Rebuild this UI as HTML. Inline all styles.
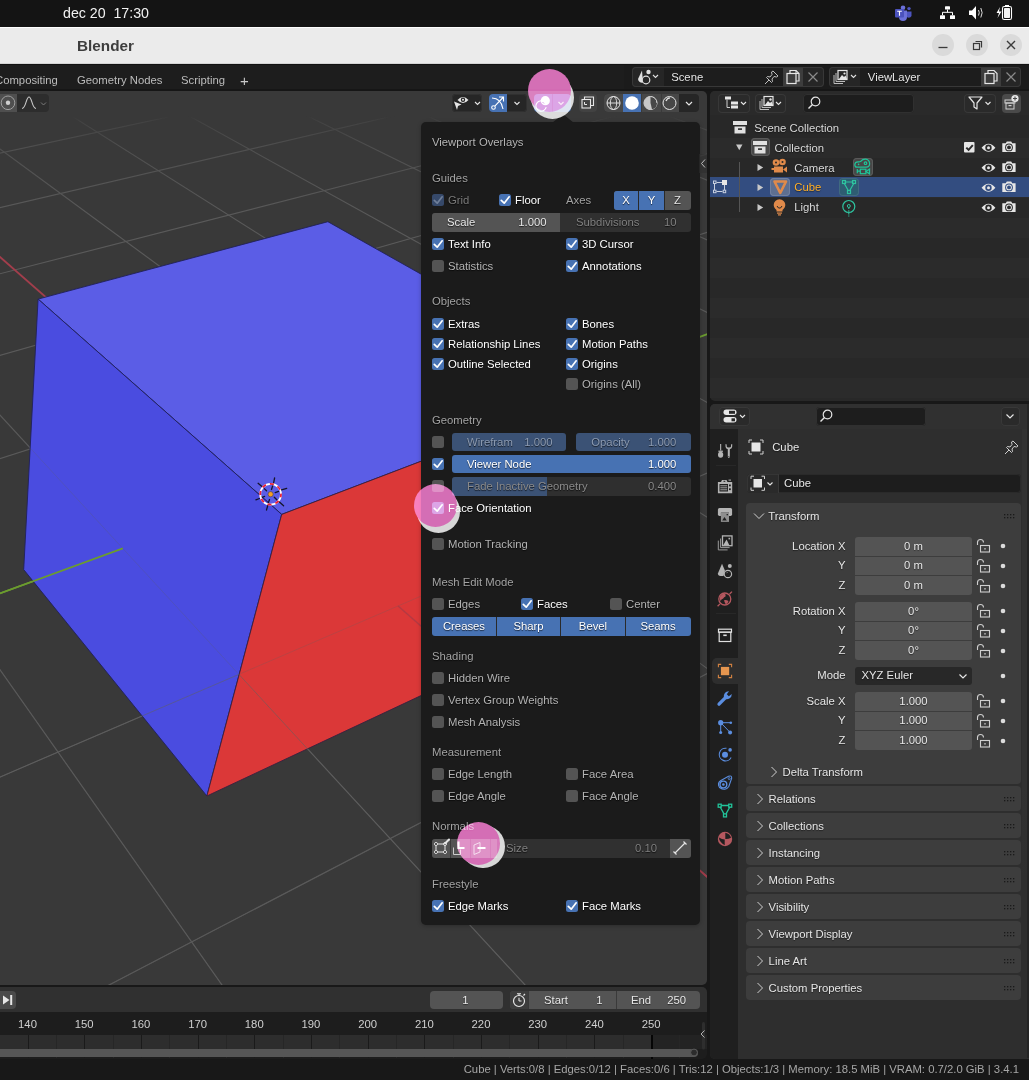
<!DOCTYPE html>
<html><head><meta charset="utf-8"><style>
html,body{margin:0;padding:0;}
body{width:1029px;height:1080px;position:relative;overflow:hidden;background:#181818;font-family:"Liberation Sans", sans-serif;}
.t{position:absolute;white-space:nowrap;line-height:1;}
</style></head><body>
<div style="position:absolute;left:0px;top:0px;width:1029px;height:1080px;background:#181818;border-radius:0px;"></div><div style="position:absolute;left:0px;top:0px;width:1029px;height:27px;background:#141414;border-radius:0px;"></div><div class="t" style="left:63px;top:6.05px;color:#f2f2f2;font-size:14.2px;font-weight:normal;">dec 20&nbsp; 17:30</div><svg style="position:absolute;left:893px;top:4px;" width="20" height="18" viewBox="0 0 20 18"><circle cx="16" cy="4.6" r="1.7" fill="#4d55c0"/><path d="M13 7.5 H18.5 V12 A3 3 0 0 1 13 12 Z" fill="#4d55c0"/><circle cx="10" cy="3.8" r="2.3" fill="#6b70d8"/><path d="M6 6.5 H14 V13 A4 4 0 0 1 6 13 Z" fill="#6b70d8"/><rect x="2" y="5" width="9" height="8.5" rx="1" fill="#4b52bd"/><path d="M4.2 7.3 H8.8 M6.5 7.3 V11.8" stroke="#fff" stroke-width="1.1"/></svg><svg style="position:absolute;left:938px;top:4px;" width="19" height="17" viewBox="0 0 19 17"><rect x="7" y="2.2" width="5" height="3.4" rx="0.6" fill="#fff"/><path d="M9.5 5.6 V8.3 M4.5 11 V8.3 H14.5 V11" fill="none" stroke="#fff" stroke-width="1"/><rect x="2" y="11.2" width="5" height="3.8" rx="0.6" fill="#fff"/><rect x="12" y="11.2" width="5" height="3.8" rx="0.6" fill="#fff"/></svg><svg style="position:absolute;left:967px;top:4px;" width="18" height="17" viewBox="0 0 18 17"><path d="M2 6.5 H5 L9 2 V15.5 L5 11 H2 Z" fill="#fff"/><path d="M11.5 6 Q13 8.7 11.5 11.5 M13.8 4 Q16.5 8.7 13.8 13.5" fill="none" stroke="#ddd" stroke-width="1"/></svg><svg style="position:absolute;left:995px;top:3px;" width="19" height="18" viewBox="0 0 19 18"><path d="M5 4 L1.5 10 H4 L2.5 15 L6.5 8.5 H4 Z" fill="#fff"/><rect x="7.5" y="3.5" width="9" height="13" rx="1.8" fill="none" stroke="#fff" stroke-width="1.1"/><rect x="10" y="2" width="4" height="1.5" fill="#fff"/><rect x="9" y="5" width="6" height="10" rx="0.8" fill="#f2f2f2"/></svg><div style="position:absolute;left:0px;top:27px;width:1029px;height:37px;background:#ebebeb;border-radius:0px;"></div><div style="position:absolute;left:0px;top:27px;width:1029px;height:1px;background:#ffffff;border-radius:0px;"></div><div class="t" style="left:77px;top:38.05px;color:#3d3d3d;font-size:15.3px;font-weight:bold;">Blender</div><div style="position:absolute;left:932px;top:34px;width:22px;height:22px;border-radius:11px;background:#dadada"></div><div style="position:absolute;left:966px;top:34px;width:22px;height:22px;border-radius:11px;background:#dadada"></div><div style="position:absolute;left:1000px;top:34px;width:22px;height:22px;border-radius:11px;background:#dadada"></div><svg style="position:absolute;left:932px;top:34px;" width="22" height="22" viewBox="0 0 22 22"><line x1="6.5" y1="13.5" x2="15.5" y2="13.5" stroke="#3a3a3a" stroke-width="1.3"/></svg><svg style="position:absolute;left:966px;top:34px;" width="22" height="22" viewBox="0 0 22 22"><rect x="7.5" y="9.5" width="6" height="6" fill="none" stroke="#3a3a3a" stroke-width="1.2"/><path d="M9.5 7.5 H15.5 V13.5" fill="none" stroke="#3a3a3a" stroke-width="1.2"/></svg><svg style="position:absolute;left:1000px;top:34px;" width="22" height="22" viewBox="0 0 22 22"><path d="M7 7 L15 15 M15 7 L7 15" stroke="#3a3a3a" stroke-width="1.4"/></svg><div style="position:absolute;left:0px;top:64px;width:1029px;height:27px;background:#1d1d1d;border-radius:0px;"></div><div style="position:absolute;left:623.5px;top:65px;width:406px;height:24px;background:#1b1b1b;border-radius:0px;"></div><div style="position:absolute;left:0px;top:64px;width:1029px;height:1px;background:#121212;border-radius:0px;"></div><div style="position:absolute;left:0px;top:89px;width:1029px;height:2px;background:#161616;border-radius:0px;"></div><div style="position:absolute;left:0px;top:63px;width:1029px;height:1px;background:#d4d4d4;border-radius:0px;"></div><div class="t" style="left:-5px;top:75.17px;color:#bcbcbc;font-size:11.3px;font-weight:normal;">Compositing</div><div class="t" style="left:77px;top:75.17px;color:#bcbcbc;font-size:11.3px;font-weight:normal;">Geometry Nodes</div><div class="t" style="left:181px;top:75.17px;color:#bcbcbc;font-size:11.3px;font-weight:normal;">Scripting</div><div class="t" style="left:240px;top:73.33px;color:#c8c8c8;font-size:15px;font-weight:normal;">+</div><div style="position:absolute;left:0;top:91px;width:707px;height:894px;background:#393939;border-radius:0 5px 5px 0;overflow:hidden"><svg width="707" height="894" viewBox="0 91 707 894" style="position:absolute;left:0;top:0">
<defs><linearGradient id="gf" x1="0" y1="91" x2="0" y2="985" gradientUnits="userSpaceOnUse"><stop offset="0.0000" stop-color="#fff" stop-opacity="0"/><stop offset="0.0280" stop-color="#fff" stop-opacity="0"/><stop offset="0.0347" stop-color="#fff" stop-opacity="0.3"/><stop offset="0.0660" stop-color="#fff" stop-opacity="0.7"/><stop offset="0.1443" stop-color="#fff" stop-opacity="1"/><stop offset="1.0000" stop-color="#fff" stop-opacity="1"/></linearGradient><mask id="gm"><rect x="0" y="91" width="707" height="894" fill="url(#gf)"/></mask></defs>
<g mask="url(#gm)"><line x1="-36.1" y1="2233.0" x2="1969.9" y2="388.5" stroke="#5a5a5a" stroke-width="1.15" stroke-opacity="1"/><line x1="-210.4" y1="1596.3" x2="1719.6" y2="315.4" stroke="#5a5a5a" stroke-width="1.15" stroke-opacity="1"/><line x1="-317.0" y1="1206.9" x2="1511.5" y2="254.6" stroke="#5a5a5a" stroke-width="1.15" stroke-opacity="1"/><line x1="-388.9" y1="944.1" x2="1335.5" y2="203.2" stroke="#5a5a5a" stroke-width="1.15" stroke-opacity="1"/><line x1="-479.8" y1="612.1" x2="1054.5" y2="121.1" stroke="#5a5a5a" stroke-width="1.15" stroke-opacity="1"/><line x1="-510.3" y1="500.5" x2="940.4" y2="87.8" stroke="#5a5a5a" stroke-width="1.15" stroke-opacity="1"/><line x1="-534.8" y1="410.9" x2="839.9" y2="58.4" stroke="#5a5a5a" stroke-width="1.15" stroke-opacity="1"/><line x1="-555.0" y1="337.4" x2="750.6" y2="32.3" stroke="#5a5a5a" stroke-width="1.15" stroke-opacity="1"/><line x1="-571.8" y1="276.0" x2="670.8" y2="9.0" stroke="#5a5a5a" stroke-width="1.15" stroke-opacity="1"/><line x1="-586.0" y1="223.9" x2="598.9" y2="-12.0" stroke="#5a5a5a" stroke-width="1.15" stroke-opacity="1"/><line x1="-598.3" y1="179.2" x2="534.0" y2="-31.0" stroke="#5a5a5a" stroke-width="1.15" stroke-opacity="1"/><line x1="-608.9" y1="140.4" x2="474.9" y2="-48.2" stroke="#5a5a5a" stroke-width="1.15" stroke-opacity="1"/><line x1="-618.2" y1="106.4" x2="421.1" y2="-64.0" stroke="#5a5a5a" stroke-width="1.15" stroke-opacity="1"/><line x1="-626.4" y1="76.4" x2="371.7" y2="-78.4" stroke="#5a5a5a" stroke-width="1.15" stroke-opacity="1"/><line x1="-36.1" y1="2233.0" x2="-626.4" y2="76.4" stroke="#5a5a5a" stroke-width="1.15" stroke-opacity="1"/><line x1="354.8" y1="1873.6" x2="-529.7" y2="61.4" stroke="#5a5a5a" stroke-width="1.15" stroke-opacity="1"/><line x1="653.9" y1="1598.5" x2="-438.2" y2="47.2" stroke="#5a5a5a" stroke-width="1.15" stroke-opacity="1"/><line x1="890.2" y1="1381.2" x2="-351.5" y2="33.7" stroke="#5a5a5a" stroke-width="1.15" stroke-opacity="1"/><line x1="1239.8" y1="1059.8" x2="-190.8" y2="8.8" stroke="#5a5a5a" stroke-width="1.15" stroke-opacity="1"/><line x1="1372.8" y1="937.5" x2="-116.3" y2="-2.7" stroke="#5a5a5a" stroke-width="1.15" stroke-opacity="1"/><line x1="1486.0" y1="833.4" x2="-45.2" y2="-13.7" stroke="#5a5a5a" stroke-width="1.15" stroke-opacity="1"/><line x1="1583.7" y1="743.6" x2="22.5" y2="-24.2" stroke="#5a5a5a" stroke-width="1.15" stroke-opacity="1"/><line x1="1668.8" y1="665.3" x2="87.3" y2="-34.3" stroke="#5a5a5a" stroke-width="1.15" stroke-opacity="1"/><line x1="1743.6" y1="596.6" x2="149.1" y2="-43.9" stroke="#5a5a5a" stroke-width="1.15" stroke-opacity="1"/><line x1="1809.8" y1="535.6" x2="208.4" y2="-53.1" stroke="#5a5a5a" stroke-width="1.15" stroke-opacity="1"/><line x1="1869.0" y1="481.3" x2="265.1" y2="-61.8" stroke="#5a5a5a" stroke-width="1.15" stroke-opacity="1"/><line x1="1922.0" y1="432.5" x2="319.5" y2="-70.3" stroke="#5a5a5a" stroke-width="1.15" stroke-opacity="1"/><line x1="1969.9" y1="388.5" x2="371.7" y2="-78.4" stroke="#5a5a5a" stroke-width="1.15" stroke-opacity="1"/><line x1="1081.6" y1="1205.2" x2="-269.1" y2="21.0" stroke="#a23e4c" stroke-width="1.8" stroke-opacity="1"/><line x1="-440.7" y1="754.9" x2="1184.9" y2="159.2" stroke="#6a9a30" stroke-width="1.8" stroke-opacity="1"/></g>
<polygon points="38.1,299.1 327.9,221.7 619.3,385.7 281.7,514.4" fill="#5b5de6" stroke="#20205a" stroke-width="0.9" stroke-linejoin="round"/>
<polygon points="38.1,299.1 281.7,514.4 206.9,796.0 23.7,569.6" fill="#4a4ce0" stroke="#20205a" stroke-width="0.9" stroke-linejoin="round"/>
<polygon points="281.7,514.4 619.3,385.7 619.3,602.6 206.9,796.0" fill="#db3838" stroke="#3a2040" stroke-width="0.9" stroke-linejoin="round"/>
<g><line x1="-36.1" y1="2233.0" x2="-626.4" y2="76.4" stroke="#5a5a5a" stroke-width="1" stroke-opacity="0.5"/><line x1="354.8" y1="1873.6" x2="-529.7" y2="61.4" stroke="#5a5a5a" stroke-width="1" stroke-opacity="0.5"/><line x1="653.9" y1="1598.5" x2="-438.2" y2="47.2" stroke="#5a5a5a" stroke-width="1" stroke-opacity="0.5"/><line x1="-36.1" y1="2233.0" x2="1969.9" y2="388.5" stroke="#5a5a5a" stroke-width="1" stroke-opacity="0.5"/><line x1="-210.4" y1="1596.3" x2="1719.6" y2="315.4" stroke="#5a5a5a" stroke-width="1" stroke-opacity="0.5"/><line x1="-317.0" y1="1206.9" x2="1511.5" y2="254.6" stroke="#5a5a5a" stroke-width="1" stroke-opacity="0.5"/><line x1="890.2" y1="1381.2" x2="238.9" y2="674.4" stroke="#606060" stroke-width="1" stroke-opacity="0.55"/><line x1="238.9" y1="674.4" x2="30.9" y2="448.7" stroke="#606060" stroke-width="1" stroke-opacity="0.25"/><line x1="-388.9" y1="944.1" x2="238.9" y2="674.4" stroke="#606060" stroke-width="1" stroke-opacity="0.55"/><line x1="238.9" y1="674.4" x2="539.4" y2="545.2" stroke="#606060" stroke-width="1" stroke-opacity="0.25"/><line x1="1081.6" y1="1205.2" x2="398.1" y2="606.0" stroke="#9b3a4a" stroke-width="1.5" stroke-opacity="0.6"/><line x1="-440.7" y1="754.9" x2="122.8" y2="548.4" stroke="#6b9c2e" stroke-width="1.8" stroke-opacity="1"/></g>
<line x1="274.6" y1="478" x2="273.4" y2="483.9" stroke="#15152a" stroke-width="1.3" stroke-linecap="round"/>
<line x1="272.7" y1="485.8" x2="271.5" y2="489.5" stroke="#15152a" stroke-width="1.3" stroke-linecap="round"/>
<line x1="269.5" y1="499.5" x2="268.4" y2="502.6" stroke="#15152a" stroke-width="1.3" stroke-linecap="round"/>
<line x1="267.8" y1="505.4" x2="266.5" y2="510" stroke="#15152a" stroke-width="1.3" stroke-linecap="round"/>
<line x1="286.7" y1="488.3" x2="279.9" y2="490.4" stroke="#15152a" stroke-width="1.3" stroke-linecap="round"/>
<line x1="278.6" y1="491.4" x2="275.2" y2="492.6" stroke="#15152a" stroke-width="1.3" stroke-linecap="round"/>
<line x1="264.6" y1="496.4" x2="262.2" y2="497.3" stroke="#15152a" stroke-width="1.3" stroke-linecap="round"/>
<line x1="259.4" y1="498.5" x2="255.9" y2="499.8" stroke="#15152a" stroke-width="1.3" stroke-linecap="round"/>
<line x1="258.1" y1="483.3" x2="262.8" y2="487.3" stroke="#15152a" stroke-width="1.3" stroke-linecap="round"/>
<line x1="264.3" y1="488.6" x2="266.5" y2="490.8" stroke="#15152a" stroke-width="1.3" stroke-linecap="round"/>
<line x1="274.3" y1="497.3" x2="276.8" y2="499.8" stroke="#15152a" stroke-width="1.3" stroke-linecap="round"/>
<line x1="278.6" y1="501.3" x2="283.6" y2="505.7" stroke="#15152a" stroke-width="1.3" stroke-linecap="round"/>
<circle cx="270.6" cy="494.2" r="10.4" fill="none" stroke="#ffffff" stroke-width="1.8"/>
<circle cx="270.6" cy="494.2" r="10.4" fill="none" stroke="#e8203a" stroke-width="1.8" stroke-dasharray="4.08 4.08" stroke-dashoffset="1"/>
<circle cx="270.6" cy="494.2" r="2.6" fill="#f5a020" stroke="#30306a" stroke-width="0.6"/>
</svg></div><div style="position:absolute;left:710px;top:91px;width:319px;height:310px;background:#282828;border-radius:5px 0 0 5px"></div><div style="position:absolute;left:710px;top:91px;width:319px;height:24px;background:#2a2a2a;border-radius:0px;border-radius:5px 0 0 0"></div><div style="position:absolute;left:710px;top:404px;width:319px;height:655px;background:#2e2e2e;border-radius:5px 0 0 5px;overflow:hidden"></div><div style="position:absolute;left:710px;top:404px;width:319px;height:25px;background:#303030;border-radius:0px;border-radius:5px 0 0 0"></div><div style="position:absolute;left:710px;top:429px;width:28px;height:630px;background:#1f1f1f;border-radius:0px;border-radius:0 0 0 5px"></div><div style="position:absolute;left:1021.5px;top:429px;width:6px;height:450px;background:linear-gradient(#323232 0%,#323232 80%,rgba(50,50,50,0) 100%)"></div><div style="position:absolute;left:1027px;top:404px;width:2px;height:654px;background:#242424;border-radius:0px;border-radius:0 0 0 0"></div><div style="position:absolute;left:0;top:987px;width:707px;height:72px;background:#1d1d1d;border-radius:0 5px 5px 0;overflow:hidden"></div><div style="position:absolute;left:0px;top:987px;width:707px;height:25px;background:#303030;border-radius:0px;border-radius:0 5px 0 0"></div><div class="t" style="right:10px;top:1064.27px;color:#a6a6a6;font-size:11.3px;font-weight:normal;text-align:right;">Cube | Verts:0/8 | Edges:0/12 | Faces:0/6 | Tris:12 | Objects:1/3 | Memory: 18.5 MiB | VRAM: 0.7/2.0 GiB | 3.4.1</div><div style="position:absolute;left:632.3px;top:67.2px;width:191.5px;height:19.7px;background:#262626;border-radius:4px;box-shadow:inset 0 0 0 1px #383838"></div><div style="position:absolute;left:663.8px;top:68.2px;width:119.6px;height:17.7px;background:#1d1d1d;border-radius:0px;"></div><div style="position:absolute;left:783.4px;top:68.2px;width:19.5px;height:17.7px;background:#3d3d3d;border-radius:0px;"></div><svg style="position:absolute;left:636px;top:69px;" width="28" height="16" viewBox="0 0 28 16"><path d="M6 1.5 L2 10 A4 4 0 0 0 7 13.5" fill="#e0e0e0"/><circle cx="12.5" cy="3" r="2.2" fill="#e0e0e0"/><circle cx="10" cy="11" r="3.8" fill="#282828" stroke="#e0e0e0" stroke-width="1.2"/><path d="M17 6 L19.5 8.5 L22 6" fill="none" stroke="#e0e0e0" stroke-width="1.1"/></svg><div class="t" style="left:671.2px;top:71.57px;color:#e6e6e6;font-size:11.3px;font-weight:normal;text-shadow:0 1px 1px rgba(0,0,0,0.5);">Scene</div><svg style="position:absolute;left:764px;top:69px;" width="16" height="16" viewBox="0 0 16 16"><path d="M9 2 L14 7 L12.5 8 L10 7.5 L8 10 L8.5 12.5 L7.5 13.5 L2.5 8.5 L3.5 7.5 L6 8 L8 5.5 L7.5 3 Z" fill="none" stroke="#c0c0c0" stroke-width="1"/><path d="M5 11 L1 15" stroke="#c0c0c0" stroke-width="1"/></svg><svg style="position:absolute;left:785px;top:69px;" width="16" height="16" viewBox="0 0 16 16"><path d="M5 4 V1.5 H11 L14 4.5 V12 H11" fill="none" stroke="#e6e6e6" stroke-width="1.2"/><rect x="2" y="4.5" width="9" height="10" fill="none" stroke="#e6e6e6" stroke-width="1.2"/><path d="M11 1.5 V4.5 H14" fill="none" stroke="#e6e6e6" stroke-width="1"/></svg><svg style="position:absolute;left:805px;top:69px;" width="16" height="16" viewBox="0 0 16 16"><path d="M3.5 3.5 L12.5 12.5 M12.5 3.5 L3.5 12.5" stroke="#8a8a8a" stroke-width="1.2"/></svg><div style="position:absolute;left:829.3px;top:67.2px;width:192px;height:19.7px;background:#262626;border-radius:4px;box-shadow:inset 0 0 0 1px #383838"></div><div style="position:absolute;left:860px;top:68.2px;width:121px;height:17.7px;background:#1d1d1d;border-radius:0px;"></div><div style="position:absolute;left:981px;top:68.2px;width:19.5px;height:17.7px;background:#3d3d3d;border-radius:0px;"></div><svg style="position:absolute;left:833px;top:69px;" width="28" height="16" viewBox="0 0 28 16"><rect x="5" y="1.5" width="9" height="9" fill="none" stroke="#e6e6e6" stroke-width="1.2"/><path d="M6 10 L9 6 L11 8 L12.5 6.5 L14 10 Z" fill="#e6e6e6"/><circle cx="11.5" cy="4.5" r="1.1" fill="#e6e6e6"/><path d="M3 4 V12.5 H12 M1 6 V14.5 H10" fill="none" stroke="#bdbdbd" stroke-width="1"/><path d="M18 6 L20.5 8.5 L23 6" fill="none" stroke="#e0e0e0" stroke-width="1.1"/></svg><div class="t" style="left:867.8px;top:71.57px;color:#e6e6e6;font-size:11.3px;font-weight:normal;text-shadow:0 1px 1px rgba(0,0,0,0.5);">ViewLayer</div><svg style="position:absolute;left:983px;top:69px;" width="16" height="16" viewBox="0 0 16 16"><path d="M5 4 V1.5 H11 L14 4.5 V12 H11" fill="none" stroke="#e6e6e6" stroke-width="1.2"/><rect x="2" y="4.5" width="9" height="10" fill="none" stroke="#e6e6e6" stroke-width="1.2"/></svg><svg style="position:absolute;left:1003px;top:69px;" width="16" height="16" viewBox="0 0 16 16"><path d="M3.5 3.5 L12.5 12.5 M12.5 3.5 L3.5 12.5" stroke="#8a8a8a" stroke-width="1.2"/></svg><div style="position:absolute;left:0px;top:93.8px;width:17.2px;height:18.1px;background:#4f4f4f;border-radius:0px;"></div><div style="position:absolute;left:17.2px;top:93.8px;width:31.5px;height:18.1px;background:#2d2d2d;border-radius:0px;border-radius:0 4px 4px 0"></div><svg style="position:absolute;left:0px;top:94px;" width="18" height="18" viewBox="0 0 18 18"><circle cx="8" cy="8.8" r="6.8" fill="none" stroke="#a8a8a8" stroke-width="0.9"/><circle cx="8" cy="8.8" r="2.2" fill="#d0d0d0"/></svg><svg style="position:absolute;left:18px;top:94px;" width="31" height="18" viewBox="0 0 31 18"><path d="M4 14.5 C8 14.5 8 3 11 3 C14 3 14 14.5 18 14.5" fill="none" stroke="#c8c8c8" stroke-width="1.1"/><path d="M23 8.5 L25.5 11 L28 8.5" fill="none" stroke="#7a7a7a" stroke-width="1"/></svg><div style="position:absolute;left:452.4px;top:93.8px;width:29.7px;height:18.3px;background:#262626;border-radius:4px;box-shadow:inset 0 0 0 1px #303030"></div><svg style="position:absolute;left:452px;top:94px;" width="30" height="18" viewBox="0 0 30 18"><path d="M5.5 6 Q11 0 16.5 6 Q11 12 5.5 6 Z" fill="#e6e6e6"/><circle cx="11" cy="5.7" r="2.2" fill="#262626"/><circle cx="11" cy="5.7" r="1" fill="#e6e6e6"/><path d="M2 7.5 L9.5 10.5 L6 12 L5 16 Z" fill="#e6e6e6"/><path d="M23 8 L25.5 10.5 L28 8" fill="none" stroke="#e6e6e6" stroke-width="1.1"/></svg><div style="position:absolute;left:489.1px;top:93.8px;width:37.9px;height:18.3px;background:#262626;border-radius:4px;box-shadow:inset 0 0 0 1px #303030"></div><div style="position:absolute;left:489.1px;top:93.8px;width:18px;height:18.3px;background:#4772b3;border-radius:0px;border-radius:4px 0 0 4px"></div><svg style="position:absolute;left:489px;top:94px;" width="38" height="18" viewBox="0 0 38 18"><path d="M3 4 Q12 4 14 15" fill="none" stroke="#fff" stroke-width="1.1"/><circle cx="4.5" cy="13.5" r="1.8" fill="none" stroke="#fff" stroke-width="1.1"/><path d="M5.8 12.2 L14 3.5 M10 3 H14.5 V7.5" fill="none" stroke="#fff" stroke-width="1.1"/><path d="M25.5 8 L28 10.5 L30.5 8" fill="none" stroke="#e6e6e6" stroke-width="1.1"/></svg><div style="position:absolute;left:533.9px;top:93.8px;width:37.3px;height:18.3px;background:#4772b3;border-radius:4px;"></div><div style="position:absolute;left:551.6px;top:93.8px;width:1px;height:18.3px;background:#3a5d95;border-radius:0px;"></div><svg style="position:absolute;left:534px;top:94px;" width="18" height="18" viewBox="0 0 18 18"><circle cx="11.3" cy="6.7" r="4.6" fill="#fff"/><path d="M9.2 7.2 A5.2 5.2 0 1 0 12.2 13.2" fill="none" stroke="#fff" stroke-width="1.1"/><path d="M8.5 8 L10 9.5" stroke="#4772b3" stroke-width="1"/></svg><svg style="position:absolute;left:552px;top:94px;" width="19" height="18" viewBox="0 0 19 18"><path d="M6.5 8 L9 10.5 L11.5 8" fill="none" stroke="#e6e6e6" stroke-width="1.1"/></svg><div style="position:absolute;left:579.4px;top:93.7px;width:17.3px;height:18.3px;background:#424242;border-radius:4px;"></div><svg style="position:absolute;left:579px;top:94px;" width="18" height="18" viewBox="0 0 18 18"><rect x="3" y="5.5" width="8.5" height="8.5" fill="none" stroke="#e6e6e6" stroke-width="1.1"/><path d="M5.5 5.5 V3 H14.5 V11.5 H11.5" fill="none" stroke="#e6e6e6" stroke-width="1.1"/><path d="M5.5 8 V10.5 H8" fill="none" stroke="#e6e6e6" stroke-width="1"/></svg><div style="position:absolute;left:604.3px;top:93.7px;width:94.3px;height:18.3px;background:#262626;border-radius:4px;"></div><div style="position:absolute;left:604.3px;top:93.7px;width:18.5px;height:18.3px;background:#474747;border-radius:0px;border-radius:4px 0 0 4px"></div><div style="position:absolute;left:622.8px;top:93.7px;width:18.2px;height:18.3px;background:#4772b3;border-radius:0px;"></div><div style="position:absolute;left:641px;top:93.7px;width:19.5px;height:18.3px;background:#474747;border-radius:0px;"></div><div style="position:absolute;left:660.5px;top:93.7px;width:18.7px;height:18.3px;background:#474747;border-radius:0px;"></div><div style="position:absolute;left:641px;top:93.7px;width:1px;height:18.3px;background:#3a3a3a;border-radius:0px;"></div><div style="position:absolute;left:660.5px;top:93.7px;width:1px;height:18.3px;background:#3a3a3a;border-radius:0px;"></div><svg style="position:absolute;left:604px;top:94px;" width="19" height="18" viewBox="0 0 19 18"><circle cx="9.5" cy="9" r="6.5" fill="none" stroke="#e6e6e6" stroke-width="1"/><ellipse cx="9.5" cy="9" rx="3.2" ry="6.5" fill="none" stroke="#e6e6e6" stroke-width="0.9"/><path d="M3 9 H16" stroke="#e6e6e6" stroke-width="0.9"/></svg><svg style="position:absolute;left:623px;top:94px;" width="18" height="18" viewBox="0 0 18 18"><circle cx="9" cy="9" r="6.8" fill="#ffffff"/></svg><svg style="position:absolute;left:641px;top:94px;" width="19" height="18" viewBox="0 0 19 18"><circle cx="9.5" cy="9" r="6.5" fill="none" stroke="#e6e6e6" stroke-width="1"/><path d="M9.5 2.5 V9 H16 A6.5 6.5 0 0 1 9.5 15.5 A6.5 6.5 0 0 1 3 9 A6.5 6.5 0 0 1 9.5 2.5 Z" fill="#c8c8c8"/><path d="M9.5 9 H16 A6.5 6.5 0 0 1 11 15.3 Z" fill="#474747"/></svg><svg style="position:absolute;left:660px;top:94px;" width="19" height="18" viewBox="0 0 19 18"><circle cx="9.5" cy="9" r="6.5" fill="none" stroke="#e6e6e6" stroke-width="1"/><path d="M6 7 Q7 4 10 3.8" fill="none" stroke="#e6e6e6" stroke-width="1.3"/></svg><svg style="position:absolute;left:679px;top:94px;" width="20" height="18" viewBox="0 0 20 18"><path d="M7 8 L10 11 L13 8" fill="none" stroke="#e6e6e6" stroke-width="1.2"/></svg><div style="position:absolute;left:0px;top:990.8px;width:16px;height:18px;background:#4a4a4a;border-radius:0px;border-radius:0 4px 4px 0"></div><svg style="position:absolute;left:0px;top:991px;" width="16" height="18" viewBox="0 0 16 18"><path d="M3 4.5 L9.5 9 L3 13.5 Z" fill="#e6e6e6"/><rect x="10.2" y="4" width="2" height="10" fill="#e6e6e6"/></svg><div style="position:absolute;left:429.7px;top:990.8px;width:73.5px;height:18.5px;background:#545454;border-radius:4px;"></div><div class="t" style="left:365.5px;width:200px;top:994.67px;color:#e6e6e6;font-size:11.3px;font-weight:normal;text-align:center;text-shadow:0 1px 1px rgba(0,0,0,0.5);">1</div><div style="position:absolute;left:509.8px;top:990.8px;width:190.4px;height:18.5px;background:#545454;border-radius:4px;"></div><div style="position:absolute;left:509.8px;top:990.8px;width:18.5px;height:18.5px;background:#3d3d3d;border-radius:0px;border-radius:4px 0 0 4px"></div><div style="position:absolute;left:528.3px;top:990.8px;width:1px;height:18.5px;background:#3a3a3a;border-radius:0px;"></div><div style="position:absolute;left:616px;top:990.8px;width:1px;height:18.5px;background:#3a3a3a;border-radius:0px;"></div><svg style="position:absolute;left:510px;top:991px;" width="18" height="18" viewBox="0 0 18 18"><circle cx="9" cy="10" r="5.5" fill="none" stroke="#e6e6e6" stroke-width="1.2"/><path d="M9 10 V6.8 M9 10 H11.5 M7 2.8 H11 M9 2.8 V4.5 M13.5 4.5 L15 3" fill="none" stroke="#e6e6e6" stroke-width="1.1"/></svg><div class="t" style="left:456px;width:200px;top:994.67px;color:#e6e6e6;font-size:11.3px;font-weight:normal;text-align:center;text-shadow:0 1px 1px rgba(0,0,0,0.5);">Start</div><div class="t" style="right:426.5px;top:994.67px;color:#e6e6e6;font-size:11.3px;font-weight:normal;text-align:right;text-shadow:0 1px 1px rgba(0,0,0,0.5);">1</div><div class="t" style="left:541px;width:200px;top:994.67px;color:#e6e6e6;font-size:11.3px;font-weight:normal;text-align:center;text-shadow:0 1px 1px rgba(0,0,0,0.5);">End</div><div class="t" style="right:343px;top:994.67px;color:#e6e6e6;font-size:11.3px;font-weight:normal;text-align:right;text-shadow:0 1px 1px rgba(0,0,0,0.5);">250</div><div class="t" style="left:-72.5px;width:200px;top:1019.27px;color:#cfcfcf;font-size:11.3px;font-weight:normal;text-align:center;">140</div><div class="t" style="left:-15.810000000000002px;width:200px;top:1019.27px;color:#cfcfcf;font-size:11.3px;font-weight:normal;text-align:center;">150</div><div class="t" style="left:40.879999999999995px;width:200px;top:1019.27px;color:#cfcfcf;font-size:11.3px;font-weight:normal;text-align:center;">160</div><div class="t" style="left:97.57px;width:200px;top:1019.27px;color:#cfcfcf;font-size:11.3px;font-weight:normal;text-align:center;">170</div><div class="t" style="left:154.26px;width:200px;top:1019.27px;color:#cfcfcf;font-size:11.3px;font-weight:normal;text-align:center;">180</div><div class="t" style="left:210.95px;width:200px;top:1019.27px;color:#cfcfcf;font-size:11.3px;font-weight:normal;text-align:center;">190</div><div class="t" style="left:267.64px;width:200px;top:1019.27px;color:#cfcfcf;font-size:11.3px;font-weight:normal;text-align:center;">200</div><div class="t" style="left:324.33px;width:200px;top:1019.27px;color:#cfcfcf;font-size:11.3px;font-weight:normal;text-align:center;">210</div><div class="t" style="left:381.02px;width:200px;top:1019.27px;color:#cfcfcf;font-size:11.3px;font-weight:normal;text-align:center;">220</div><div class="t" style="left:437.71000000000004px;width:200px;top:1019.27px;color:#cfcfcf;font-size:11.3px;font-weight:normal;text-align:center;">230</div><div class="t" style="left:494.4px;width:200px;top:1019.27px;color:#cfcfcf;font-size:11.3px;font-weight:normal;text-align:center;">240</div><div class="t" style="left:551.0899999999999px;width:200px;top:1019.27px;color:#cfcfcf;font-size:11.3px;font-weight:normal;text-align:center;">250</div><div style="position:absolute;left:0px;top:1035px;width:651px;height:14px;background:#2d2d2d;border-radius:0px;"></div><div style="position:absolute;left:651px;top:1035px;width:56px;height:14px;background:#232323;border-radius:0px;"></div><div style="position:absolute;left:28px;top:1035px;width:1px;height:23px;background:#1a1a1a;border-radius:0px;"></div><div style="position:absolute;left:56px;top:1035px;width:1px;height:23px;background:#262626;border-radius:0px;"></div><div style="position:absolute;left:84px;top:1035px;width:1px;height:23px;background:#1a1a1a;border-radius:0px;"></div><div style="position:absolute;left:113px;top:1035px;width:1px;height:23px;background:#262626;border-radius:0px;"></div><div style="position:absolute;left:141px;top:1035px;width:1px;height:23px;background:#1a1a1a;border-radius:0px;"></div><div style="position:absolute;left:169px;top:1035px;width:1px;height:23px;background:#262626;border-radius:0px;"></div><div style="position:absolute;left:198px;top:1035px;width:1px;height:23px;background:#1a1a1a;border-radius:0px;"></div><div style="position:absolute;left:226px;top:1035px;width:1px;height:23px;background:#262626;border-radius:0px;"></div><div style="position:absolute;left:254px;top:1035px;width:1px;height:23px;background:#1a1a1a;border-radius:0px;"></div><div style="position:absolute;left:283px;top:1035px;width:1px;height:23px;background:#262626;border-radius:0px;"></div><div style="position:absolute;left:311px;top:1035px;width:1px;height:23px;background:#1a1a1a;border-radius:0px;"></div><div style="position:absolute;left:339px;top:1035px;width:1px;height:23px;background:#262626;border-radius:0px;"></div><div style="position:absolute;left:368px;top:1035px;width:1px;height:23px;background:#1a1a1a;border-radius:0px;"></div><div style="position:absolute;left:396px;top:1035px;width:1px;height:23px;background:#262626;border-radius:0px;"></div><div style="position:absolute;left:424px;top:1035px;width:1px;height:23px;background:#1a1a1a;border-radius:0px;"></div><div style="position:absolute;left:453px;top:1035px;width:1px;height:23px;background:#262626;border-radius:0px;"></div><div style="position:absolute;left:481px;top:1035px;width:1px;height:23px;background:#1a1a1a;border-radius:0px;"></div><div style="position:absolute;left:509px;top:1035px;width:1px;height:23px;background:#262626;border-radius:0px;"></div><div style="position:absolute;left:538px;top:1035px;width:1px;height:23px;background:#1a1a1a;border-radius:0px;"></div><div style="position:absolute;left:566px;top:1035px;width:1px;height:23px;background:#262626;border-radius:0px;"></div><div style="position:absolute;left:594px;top:1035px;width:1px;height:23px;background:#1a1a1a;border-radius:0px;"></div><div style="position:absolute;left:623px;top:1035px;width:1px;height:23px;background:#262626;border-radius:0px;"></div><div style="position:absolute;left:651px;top:1035px;width:1px;height:23px;background:#1a1a1a;border-radius:0px;"></div><div style="position:absolute;left:679px;top:1035px;width:1px;height:23px;background:#262626;border-radius:0px;"></div><div style="position:absolute;left:651px;top:1035px;width:1.5px;height:24px;background:#050505;border-radius:0px;"></div><div style="position:absolute;left:-10px;top:1048.5px;width:708px;height:8.5px;background:#565656;border-radius:4.5px;"></div><svg style="position:absolute;left:686px;top:1047px;" width="14" height="12" viewBox="0 0 14 12"><circle cx="8" cy="5.5" r="3.4" fill="#2c2c2c" stroke="#5a5a5a" stroke-width="1"/></svg><svg style="position:absolute;left:698px;top:1021.5px;" width="9" height="28" viewBox="0 0 9 28"><rect x="4" y="0" width="3" height="27.5" rx="1.5" fill="#2e2e2e"/><path d="M6.5 8.5 L3 12 L6.5 15.5" fill="none" stroke="#b0b0b0" stroke-width="1"/></svg><div style="position:absolute;left:421px;top:122px;width:279px;height:803px;background:#1b1b1b;border-radius:5px;box-shadow:0 1px 4px rgba(0,0,0,0.25)"></div><div class="t" style="left:432px;top:136.67px;color:#b5b5b5;font-size:11.3px;font-weight:normal;text-shadow:0 1px 1px rgba(0,0,0,0.7);">Viewport Overlays</div><div class="t" style="left:432px;top:172.97px;color:#a3a3a3;font-size:11.3px;font-weight:normal;text-shadow:0 1px 1px rgba(0,0,0,0.7);">Guides</div><svg style="position:absolute;left:432px;top:194px;" width="12" height="12" viewBox="0 0 12 12"><rect x="0" y="0" width="12" height="12" rx="2.5" fill="#36496a"/><path d="M2.3 6.4 L5.2 9.2 L10.2 2.8" fill="none" stroke="#6f7f99" stroke-width="1.7" stroke-linecap="round" stroke-linejoin="round"/></svg><div class="t" style="left:448px;top:194.57px;color:#7a7a7a;font-size:11.3px;font-weight:normal;text-shadow:0 1px 1px rgba(0,0,0,0.7);">Grid</div><svg style="position:absolute;left:499px;top:194px;" width="12" height="12" viewBox="0 0 12 12"><rect x="0" y="0" width="12" height="12" rx="2.5" fill="#4772b3"/><path d="M2.3 6.4 L5.2 9.2 L10.2 2.8" fill="none" stroke="#ffffff" stroke-width="1.7" stroke-linecap="round" stroke-linejoin="round"/></svg><div class="t" style="left:515px;top:194.57px;color:#ffffff;font-size:11.3px;font-weight:normal;text-shadow:0 1px 1px rgba(0,0,0,0.7);">Floor</div><div class="t" style="left:566px;top:194.57px;color:#a3a3a3;font-size:11.3px;font-weight:normal;text-shadow:0 1px 1px rgba(0,0,0,0.7);">Axes</div><div style="position:absolute;left:614px;top:190.5px;width:77px;height:19px;background:#545454;border-radius:3px;"></div><div style="position:absolute;left:614px;top:190.5px;width:24px;height:19px;background:#4772b3;border-radius:0px;border-radius:3px 0 0 3px"></div><div style="position:absolute;left:639px;top:190.5px;width:25px;height:19px;background:#4772b3;border-radius:0px;"></div><div style="position:absolute;left:638px;top:190.5px;width:1px;height:19px;background:#2a2a2a;border-radius:0px;"></div><div style="position:absolute;left:664px;top:190.5px;width:1px;height:19px;background:#2a2a2a;border-radius:0px;"></div><div class="t" style="left:526px;width:200px;top:194.87px;color:#ffffff;font-size:11.3px;font-weight:normal;text-align:center;text-shadow:0 1px 1px rgba(0,0,0,0.7);">X</div><div class="t" style="left:551.5px;width:200px;top:194.87px;color:#ffffff;font-size:11.3px;font-weight:normal;text-align:center;text-shadow:0 1px 1px rgba(0,0,0,0.7);">Y</div><div class="t" style="left:577.5px;width:200px;top:194.87px;color:#e6e6e6;font-size:11.3px;font-weight:normal;text-align:center;text-shadow:0 1px 1px rgba(0,0,0,0.7);">Z</div><div style="position:absolute;left:432px;top:212.5px;width:259px;height:19px;background:#303030;border-radius:3px;"></div><div style="position:absolute;left:432px;top:212.5px;width:128px;height:19px;background:#545454;border-radius:0px;border-radius:3px 0 0 3px"></div><div class="t" style="left:447px;top:216.57px;color:#e6e6e6;font-size:11.3px;font-weight:normal;text-shadow:0 1px 1px rgba(0,0,0,0.7);">Scale</div><div class="t" style="right:482.5px;top:216.57px;color:#e6e6e6;font-size:11.3px;font-weight:normal;text-align:right;text-shadow:0 1px 1px rgba(0,0,0,0.7);">1.000</div><div class="t" style="left:576px;top:216.57px;color:#7f7f7f;font-size:11.3px;font-weight:normal;text-shadow:0 1px 1px rgba(0,0,0,0.7);">Subdivisions</div><div class="t" style="right:352.5px;top:216.57px;color:#7f7f7f;font-size:11.3px;font-weight:normal;text-align:right;text-shadow:0 1px 1px rgba(0,0,0,0.7);">10</div><svg style="position:absolute;left:432px;top:238px;" width="12" height="12" viewBox="0 0 12 12"><rect x="0" y="0" width="12" height="12" rx="2.5" fill="#4772b3"/><path d="M2.3 6.4 L5.2 9.2 L10.2 2.8" fill="none" stroke="#ffffff" stroke-width="1.7" stroke-linecap="round" stroke-linejoin="round"/></svg><div class="t" style="left:448px;top:238.57px;color:#ffffff;font-size:11.3px;font-weight:normal;text-shadow:0 1px 1px rgba(0,0,0,0.7);">Text Info</div><svg style="position:absolute;left:566px;top:238px;" width="12" height="12" viewBox="0 0 12 12"><rect x="0" y="0" width="12" height="12" rx="2.5" fill="#4772b3"/><path d="M2.3 6.4 L5.2 9.2 L10.2 2.8" fill="none" stroke="#ffffff" stroke-width="1.7" stroke-linecap="round" stroke-linejoin="round"/></svg><div class="t" style="left:582px;top:238.57px;color:#ffffff;font-size:11.3px;font-weight:normal;text-shadow:0 1px 1px rgba(0,0,0,0.7);">3D Cursor</div><svg style="position:absolute;left:432px;top:260px;" width="12" height="12" viewBox="0 0 12 12"><rect x="0" y="0" width="12" height="12" rx="2.5" fill="#545454"/></svg><div class="t" style="left:448px;top:260.57px;color:#b3b3b3;font-size:11.3px;font-weight:normal;text-shadow:0 1px 1px rgba(0,0,0,0.7);">Statistics</div><svg style="position:absolute;left:566px;top:260px;" width="12" height="12" viewBox="0 0 12 12"><rect x="0" y="0" width="12" height="12" rx="2.5" fill="#4772b3"/><path d="M2.3 6.4 L5.2 9.2 L10.2 2.8" fill="none" stroke="#ffffff" stroke-width="1.7" stroke-linecap="round" stroke-linejoin="round"/></svg><div class="t" style="left:582px;top:260.57px;color:#ffffff;font-size:11.3px;font-weight:normal;text-shadow:0 1px 1px rgba(0,0,0,0.7);">Annotations</div><div class="t" style="left:432px;top:296.37px;color:#a3a3a3;font-size:11.3px;font-weight:normal;text-shadow:0 1px 1px rgba(0,0,0,0.7);">Objects</div><svg style="position:absolute;left:432px;top:318px;" width="12" height="12" viewBox="0 0 12 12"><rect x="0" y="0" width="12" height="12" rx="2.5" fill="#4772b3"/><path d="M2.3 6.4 L5.2 9.2 L10.2 2.8" fill="none" stroke="#ffffff" stroke-width="1.7" stroke-linecap="round" stroke-linejoin="round"/></svg><div class="t" style="left:448px;top:318.57px;color:#ffffff;font-size:11.3px;font-weight:normal;text-shadow:0 1px 1px rgba(0,0,0,0.7);">Extras</div><svg style="position:absolute;left:566px;top:318px;" width="12" height="12" viewBox="0 0 12 12"><rect x="0" y="0" width="12" height="12" rx="2.5" fill="#4772b3"/><path d="M2.3 6.4 L5.2 9.2 L10.2 2.8" fill="none" stroke="#ffffff" stroke-width="1.7" stroke-linecap="round" stroke-linejoin="round"/></svg><div class="t" style="left:582px;top:318.57px;color:#ffffff;font-size:11.3px;font-weight:normal;text-shadow:0 1px 1px rgba(0,0,0,0.7);">Bones</div><svg style="position:absolute;left:432px;top:338px;" width="12" height="12" viewBox="0 0 12 12"><rect x="0" y="0" width="12" height="12" rx="2.5" fill="#4772b3"/><path d="M2.3 6.4 L5.2 9.2 L10.2 2.8" fill="none" stroke="#ffffff" stroke-width="1.7" stroke-linecap="round" stroke-linejoin="round"/></svg><div class="t" style="left:448px;top:338.57px;color:#ffffff;font-size:11.3px;font-weight:normal;text-shadow:0 1px 1px rgba(0,0,0,0.7);">Relationship Lines</div><svg style="position:absolute;left:566px;top:338px;" width="12" height="12" viewBox="0 0 12 12"><rect x="0" y="0" width="12" height="12" rx="2.5" fill="#4772b3"/><path d="M2.3 6.4 L5.2 9.2 L10.2 2.8" fill="none" stroke="#ffffff" stroke-width="1.7" stroke-linecap="round" stroke-linejoin="round"/></svg><div class="t" style="left:582px;top:338.57px;color:#ffffff;font-size:11.3px;font-weight:normal;text-shadow:0 1px 1px rgba(0,0,0,0.7);">Motion Paths</div><svg style="position:absolute;left:432px;top:358px;" width="12" height="12" viewBox="0 0 12 12"><rect x="0" y="0" width="12" height="12" rx="2.5" fill="#4772b3"/><path d="M2.3 6.4 L5.2 9.2 L10.2 2.8" fill="none" stroke="#ffffff" stroke-width="1.7" stroke-linecap="round" stroke-linejoin="round"/></svg><div class="t" style="left:448px;top:358.57px;color:#ffffff;font-size:11.3px;font-weight:normal;text-shadow:0 1px 1px rgba(0,0,0,0.7);">Outline Selected</div><svg style="position:absolute;left:566px;top:358px;" width="12" height="12" viewBox="0 0 12 12"><rect x="0" y="0" width="12" height="12" rx="2.5" fill="#4772b3"/><path d="M2.3 6.4 L5.2 9.2 L10.2 2.8" fill="none" stroke="#ffffff" stroke-width="1.7" stroke-linecap="round" stroke-linejoin="round"/></svg><div class="t" style="left:582px;top:358.57px;color:#ffffff;font-size:11.3px;font-weight:normal;text-shadow:0 1px 1px rgba(0,0,0,0.7);">Origins</div><svg style="position:absolute;left:566px;top:378px;" width="12" height="12" viewBox="0 0 12 12"><rect x="0" y="0" width="12" height="12" rx="2.5" fill="#545454"/></svg><div class="t" style="left:582px;top:378.57px;color:#b3b3b3;font-size:11.3px;font-weight:normal;text-shadow:0 1px 1px rgba(0,0,0,0.7);">Origins (All)</div><div class="t" style="left:432px;top:415.07px;color:#a3a3a3;font-size:11.3px;font-weight:normal;text-shadow:0 1px 1px rgba(0,0,0,0.7);">Geometry</div><svg style="position:absolute;left:432px;top:436px;" width="12" height="12" viewBox="0 0 12 12"><rect x="0" y="0" width="12" height="12" rx="2.5" fill="#545454"/></svg><div style="position:absolute;left:451.5px;top:433px;width:114.5px;height:18px;background:#3b5275;border-radius:3px;"></div><div class="t" style="left:467px;top:436.57px;color:#8c9bb2;font-size:11.3px;font-weight:normal;text-shadow:0 1px 1px rgba(0,0,0,0.7);">Wirefram</div><div class="t" style="right:476.5px;top:436.57px;color:#8c9bb2;font-size:11.3px;font-weight:normal;text-align:right;text-shadow:0 1px 1px rgba(0,0,0,0.7);">1.000</div><div style="position:absolute;left:576px;top:433px;width:114.5px;height:18px;background:#3b5275;border-radius:3px;"></div><div class="t" style="left:591.3px;top:436.57px;color:#8c9bb2;font-size:11.3px;font-weight:normal;text-shadow:0 1px 1px rgba(0,0,0,0.7);">Opacity</div><div class="t" style="right:352.70000000000005px;top:436.57px;color:#8c9bb2;font-size:11.3px;font-weight:normal;text-align:right;text-shadow:0 1px 1px rgba(0,0,0,0.7);">1.000</div><svg style="position:absolute;left:432px;top:458px;" width="12" height="12" viewBox="0 0 12 12"><rect x="0" y="0" width="12" height="12" rx="2.5" fill="#4772b3"/><path d="M2.3 6.4 L5.2 9.2 L10.2 2.8" fill="none" stroke="#ffffff" stroke-width="1.7" stroke-linecap="round" stroke-linejoin="round"/></svg><div style="position:absolute;left:451.5px;top:455px;width:239px;height:18px;background:#4772b3;border-radius:3px;"></div><div class="t" style="left:467px;top:458.57px;color:#ffffff;font-size:11.3px;font-weight:normal;text-shadow:0 1px 1px rgba(0,0,0,0.7);">Viewer Node</div><div class="t" style="right:352.70000000000005px;top:458.57px;color:#ffffff;font-size:11.3px;font-weight:normal;text-align:right;text-shadow:0 1px 1px rgba(0,0,0,0.7);">1.000</div><svg style="position:absolute;left:432px;top:480px;" width="12" height="12" viewBox="0 0 12 12"><rect x="0" y="0" width="12" height="12" rx="2.5" fill="#545454"/></svg><div style="position:absolute;left:451.5px;top:477px;width:239px;height:18.5px;background:#2f2f2f;border-radius:3px;"></div><div style="position:absolute;left:451.5px;top:477px;width:95px;height:18.5px;background:#3b5275;border-radius:0px;border-radius:3px 0 0 3px"></div><div class="t" style="left:467px;top:480.57px;color:#8a8a8a;font-size:11.3px;font-weight:normal;text-shadow:0 1px 1px rgba(0,0,0,0.7);">Fade Inactive Geometry</div><div class="t" style="right:352.70000000000005px;top:480.57px;color:#8a8a8a;font-size:11.3px;font-weight:normal;text-align:right;text-shadow:0 1px 1px rgba(0,0,0,0.7);">0.400</div><svg style="position:absolute;left:432px;top:502px;" width="12" height="12" viewBox="0 0 12 12"><rect x="0" y="0" width="12" height="12" rx="2.5" fill="#4772b3"/><path d="M2.3 6.4 L5.2 9.2 L10.2 2.8" fill="none" stroke="#ffffff" stroke-width="1.7" stroke-linecap="round" stroke-linejoin="round"/></svg><div class="t" style="left:448px;top:502.57px;color:#ffffff;font-size:11.3px;font-weight:normal;text-shadow:0 1px 1px rgba(0,0,0,0.7);">Face Orientation</div><svg style="position:absolute;left:432px;top:538px;" width="12" height="12" viewBox="0 0 12 12"><rect x="0" y="0" width="12" height="12" rx="2.5" fill="#545454"/></svg><div class="t" style="left:448px;top:538.57px;color:#b3b3b3;font-size:11.3px;font-weight:normal;text-shadow:0 1px 1px rgba(0,0,0,0.7);">Motion Tracking</div><div class="t" style="left:432px;top:576.67px;color:#a3a3a3;font-size:11.3px;font-weight:normal;text-shadow:0 1px 1px rgba(0,0,0,0.7);">Mesh Edit Mode</div><svg style="position:absolute;left:432px;top:598px;" width="12" height="12" viewBox="0 0 12 12"><rect x="0" y="0" width="12" height="12" rx="2.5" fill="#545454"/></svg><div class="t" style="left:448px;top:598.57px;color:#b3b3b3;font-size:11.3px;font-weight:normal;text-shadow:0 1px 1px rgba(0,0,0,0.7);">Edges</div><svg style="position:absolute;left:521px;top:598px;" width="12" height="12" viewBox="0 0 12 12"><rect x="0" y="0" width="12" height="12" rx="2.5" fill="#4772b3"/><path d="M2.3 6.4 L5.2 9.2 L10.2 2.8" fill="none" stroke="#ffffff" stroke-width="1.7" stroke-linecap="round" stroke-linejoin="round"/></svg><div class="t" style="left:537px;top:598.57px;color:#ffffff;font-size:11.3px;font-weight:normal;text-shadow:0 1px 1px rgba(0,0,0,0.7);">Faces</div><svg style="position:absolute;left:610px;top:598px;" width="12" height="12" viewBox="0 0 12 12"><rect x="0" y="0" width="12" height="12" rx="2.5" fill="#545454"/></svg><div class="t" style="left:626px;top:598.57px;color:#b3b3b3;font-size:11.3px;font-weight:normal;text-shadow:0 1px 1px rgba(0,0,0,0.7);">Center</div><div style="position:absolute;left:432px;top:617px;width:259px;height:18.5px;background:#4772b3;border-radius:3px;"></div><div style="position:absolute;left:496px;top:617px;width:1px;height:18.5px;background:#2a2a2a;border-radius:0px;"></div><div style="position:absolute;left:560px;top:617px;width:1px;height:18.5px;background:#2a2a2a;border-radius:0px;"></div><div style="position:absolute;left:625px;top:617px;width:1px;height:18.5px;background:#2a2a2a;border-radius:0px;"></div><div class="t" style="left:364px;width:200px;top:620.57px;color:#ffffff;font-size:11.3px;font-weight:normal;text-align:center;text-shadow:0 1px 1px rgba(0,0,0,0.7);">Creases</div><div class="t" style="left:428.5px;width:200px;top:620.57px;color:#ffffff;font-size:11.3px;font-weight:normal;text-align:center;text-shadow:0 1px 1px rgba(0,0,0,0.7);">Sharp</div><div class="t" style="left:493px;width:200px;top:620.57px;color:#ffffff;font-size:11.3px;font-weight:normal;text-align:center;text-shadow:0 1px 1px rgba(0,0,0,0.7);">Bevel</div><div class="t" style="left:558px;width:200px;top:620.57px;color:#ffffff;font-size:11.3px;font-weight:normal;text-align:center;text-shadow:0 1px 1px rgba(0,0,0,0.7);">Seams</div><div class="t" style="left:432px;top:650.67px;color:#a3a3a3;font-size:11.3px;font-weight:normal;text-shadow:0 1px 1px rgba(0,0,0,0.7);">Shading</div><svg style="position:absolute;left:432px;top:672px;" width="12" height="12" viewBox="0 0 12 12"><rect x="0" y="0" width="12" height="12" rx="2.5" fill="#545454"/></svg><div class="t" style="left:448px;top:672.57px;color:#b3b3b3;font-size:11.3px;font-weight:normal;text-shadow:0 1px 1px rgba(0,0,0,0.7);">Hidden Wire</div><svg style="position:absolute;left:432px;top:694px;" width="12" height="12" viewBox="0 0 12 12"><rect x="0" y="0" width="12" height="12" rx="2.5" fill="#545454"/></svg><div class="t" style="left:448px;top:694.57px;color:#b3b3b3;font-size:11.3px;font-weight:normal;text-shadow:0 1px 1px rgba(0,0,0,0.7);">Vertex Group Weights</div><svg style="position:absolute;left:432px;top:716px;" width="12" height="12" viewBox="0 0 12 12"><rect x="0" y="0" width="12" height="12" rx="2.5" fill="#545454"/></svg><div class="t" style="left:448px;top:716.57px;color:#b3b3b3;font-size:11.3px;font-weight:normal;text-shadow:0 1px 1px rgba(0,0,0,0.7);">Mesh Analysis</div><div class="t" style="left:432px;top:746.67px;color:#a3a3a3;font-size:11.3px;font-weight:normal;text-shadow:0 1px 1px rgba(0,0,0,0.7);">Measurement</div><svg style="position:absolute;left:432px;top:768px;" width="12" height="12" viewBox="0 0 12 12"><rect x="0" y="0" width="12" height="12" rx="2.5" fill="#545454"/></svg><div class="t" style="left:448px;top:768.57px;color:#b3b3b3;font-size:11.3px;font-weight:normal;text-shadow:0 1px 1px rgba(0,0,0,0.7);">Edge Length</div><svg style="position:absolute;left:566px;top:768px;" width="12" height="12" viewBox="0 0 12 12"><rect x="0" y="0" width="12" height="12" rx="2.5" fill="#545454"/></svg><div class="t" style="left:582px;top:768.57px;color:#b3b3b3;font-size:11.3px;font-weight:normal;text-shadow:0 1px 1px rgba(0,0,0,0.7);">Face Area</div><svg style="position:absolute;left:432px;top:790px;" width="12" height="12" viewBox="0 0 12 12"><rect x="0" y="0" width="12" height="12" rx="2.5" fill="#545454"/></svg><div class="t" style="left:448px;top:790.57px;color:#b3b3b3;font-size:11.3px;font-weight:normal;text-shadow:0 1px 1px rgba(0,0,0,0.7);">Edge Angle</div><svg style="position:absolute;left:566px;top:790px;" width="12" height="12" viewBox="0 0 12 12"><rect x="0" y="0" width="12" height="12" rx="2.5" fill="#545454"/></svg><div class="t" style="left:582px;top:790.57px;color:#b3b3b3;font-size:11.3px;font-weight:normal;text-shadow:0 1px 1px rgba(0,0,0,0.7);">Face Angle</div><div class="t" style="left:432px;top:820.67px;color:#a3a3a3;font-size:11.3px;font-weight:normal;text-shadow:0 1px 1px rgba(0,0,0,0.7);">Normals</div><div style="position:absolute;left:432px;top:838.5px;width:259px;height:19px;background:#303030;border-radius:3px;"></div><div style="position:absolute;left:432px;top:838.5px;width:65px;height:19px;background:#545454;border-radius:0px;border-radius:3px 0 0 3px"></div><div style="position:absolute;left:450px;top:838.5px;width:1px;height:19px;background:#3a3a3a;border-radius:0px;"></div><div style="position:absolute;left:470px;top:838.5px;width:1px;height:19px;background:#3a3a3a;border-radius:0px;"></div><div style="position:absolute;left:490px;top:838.5px;width:1px;height:19px;background:#3a3a3a;border-radius:0px;"></div><div class="t" style="left:506px;top:842.57px;color:#7f7f7f;font-size:11.3px;font-weight:normal;text-shadow:0 1px 1px rgba(0,0,0,0.7);">Size</div><div class="t" style="right:372px;top:842.57px;color:#7f7f7f;font-size:11.3px;font-weight:normal;text-align:right;text-shadow:0 1px 1px rgba(0,0,0,0.7);">0.10</div><div style="position:absolute;left:670px;top:838.5px;width:21px;height:19px;background:#545454;border-radius:0px;border-radius:0 3px 3px 0"></div><svg style="position:absolute;left:432px;top:838px;" width="20" height="20" viewBox="0 0 20 20"><g fill="none" stroke="#e6e6e6" stroke-width="1"><rect x="4" y="6" width="9" height="8"/></g><g fill="#1b1b1b" stroke="#e6e6e6" stroke-width="1"><circle cx="4" cy="6" r="1.5"/><circle cx="13" cy="6" r="1.5"/><circle cx="4" cy="14" r="1.5"/><circle cx="13" cy="14" r="1.5"/></g><path d="M13 5.5 L17 1.5" stroke="#e6e6e6" stroke-width="2" stroke-linecap="round"/></svg><svg style="position:absolute;left:450px;top:838px;" width="20" height="20" viewBox="0 0 20 20"><path d="M3.5 9.5 V16.5 H10.5 V11.5" fill="none" stroke="#cccccc" stroke-width="1"/><path d="M8.5 3.5 V10 H14.5" fill="none" stroke="#ffffff" stroke-width="2"/></svg><svg style="position:absolute;left:470px;top:838px;" width="20" height="20" viewBox="0 0 20 20"><path d="M4 7 L10 4.5 V14 L4 16.5 Z" fill="none" stroke="#cccccc" stroke-width="1"/><path d="M7.5 10 H15.5" stroke="#ffffff" stroke-width="2"/></svg><svg style="position:absolute;left:670px;top:838px;" width="21" height="20" viewBox="0 0 21 20"><path d="M5 15 L15 5 M3.5 13.5 L6.5 16.5 M13.5 3.5 L16.5 6.5" stroke="#e6e6e6" stroke-width="1.2"/></svg><div class="t" style="left:432px;top:878.67px;color:#a3a3a3;font-size:11.3px;font-weight:normal;text-shadow:0 1px 1px rgba(0,0,0,0.7);">Freestyle</div><svg style="position:absolute;left:432px;top:900px;" width="12" height="12" viewBox="0 0 12 12"><rect x="0" y="0" width="12" height="12" rx="2.5" fill="#4772b3"/><path d="M2.3 6.4 L5.2 9.2 L10.2 2.8" fill="none" stroke="#ffffff" stroke-width="1.7" stroke-linecap="round" stroke-linejoin="round"/></svg><div class="t" style="left:448px;top:900.57px;color:#ffffff;font-size:11.3px;font-weight:normal;text-shadow:0 1px 1px rgba(0,0,0,0.7);">Edge Marks</div><svg style="position:absolute;left:566px;top:900px;" width="12" height="12" viewBox="0 0 12 12"><rect x="0" y="0" width="12" height="12" rx="2.5" fill="#4772b3"/><path d="M2.3 6.4 L5.2 9.2 L10.2 2.8" fill="none" stroke="#ffffff" stroke-width="1.7" stroke-linecap="round" stroke-linejoin="round"/></svg><div class="t" style="left:582px;top:900.57px;color:#ffffff;font-size:11.3px;font-weight:normal;text-shadow:0 1px 1px rgba(0,0,0,0.7);">Face Marks</div><div style="position:absolute;left:710px;top:137.5px;width:319px;height:20px;background:#2b2b2b;border-radius:0px;"></div><div style="position:absolute;left:710px;top:177.5px;width:319px;height:20px;background:#2b2b2b;border-radius:0px;"></div><div style="position:absolute;left:710px;top:217.5px;width:319px;height:20px;background:#2b2b2b;border-radius:0px;"></div><div style="position:absolute;left:710px;top:257.5px;width:319px;height:20px;background:#2b2b2b;border-radius:0px;"></div><div style="position:absolute;left:710px;top:297.5px;width:319px;height:20px;background:#2b2b2b;border-radius:0px;"></div><div style="position:absolute;left:710px;top:337.5px;width:319px;height:20px;background:#2b2b2b;border-radius:0px;"></div><div style="position:absolute;left:710px;top:377.5px;width:319px;height:20px;background:#2b2b2b;border-radius:0px;"></div><div style="position:absolute;left:710px;top:177px;width:319px;height:20px;background:#334d80;border-radius:0px;"></div><div style="position:absolute;left:718px;top:93.5px;width:32px;height:19.5px;background:#2a2a2a;border-radius:4px;box-shadow:inset 0 0 0 1px #383838"></div><svg style="position:absolute;left:722px;top:95px;" width="28" height="17" viewBox="0 0 28 17"><rect x="3" y="1.5" width="6" height="3" fill="#e6e6e6"/><path d="M5 4.5 V12.5 H8" fill="none" stroke="#cfcfcf" stroke-width="1"/><rect x="9" y="6.5" width="7" height="3" fill="#e6e6e6"/><rect x="9" y="10.5" width="7" height="3" fill="#e6e6e6"/><path d="M19 7 L21.5 9.5 L24 7" fill="none" stroke="#e6e6e6" stroke-width="1.1"/></svg><div style="position:absolute;left:755px;top:93.5px;width:31px;height:19.5px;background:#2a2a2a;border-radius:4px;box-shadow:inset 0 0 0 1px #383838"></div><svg style="position:absolute;left:758px;top:95px;" width="28" height="17" viewBox="0 0 28 17"><rect x="6" y="1.5" width="9" height="9" fill="none" stroke="#e6e6e6" stroke-width="1.2"/><path d="M7 10 L10 6 L12 8 L13.5 6.5 L15 10 Z" fill="#e6e6e6"/><circle cx="12.5" cy="4.5" r="1.2" fill="#e6e6e6"/><path d="M4 4 V12.5 H13 M2 6 V14.5 H11" fill="none" stroke="#bdbdbd" stroke-width="1"/><path d="M18 7 L20.5 9.5 L23 7" fill="none" stroke="#e6e6e6" stroke-width="1.1"/></svg><div style="position:absolute;left:803px;top:93.5px;width:111px;height:19.5px;background:#1d1d1d;border-radius:4px;box-shadow:inset 0 0 0 1px #303030"></div><svg style="position:absolute;left:806px;top:95px;" width="17" height="17" viewBox="0 0 17 17"><circle cx="9.5" cy="6.5" r="4.3" fill="none" stroke="#e6e6e6" stroke-width="1.2"/><path d="M6.5 9.5 L2.5 13.5" stroke="#e6e6e6" stroke-width="1.4"/></svg><div style="position:absolute;left:964px;top:93.5px;width:32px;height:19.5px;background:#2a2a2a;border-radius:4px;box-shadow:inset 0 0 0 1px #383838"></div><svg style="position:absolute;left:966px;top:95px;" width="30" height="17" viewBox="0 0 30 17"><path d="M3 2 H16 L11 8 V14 L8 12 V8 Z" fill="none" stroke="#e6e6e6" stroke-width="1.2" stroke-linejoin="round"/><path d="M19.5 7 L22 9.5 L24.5 7" fill="none" stroke="#e6e6e6" stroke-width="1.1"/></svg><div style="position:absolute;left:1001.5px;top:93.5px;width:19px;height:19.5px;background:#4a4a4a;border-radius:4px;"></div><svg style="position:absolute;left:1002px;top:94px;" width="18" height="18" viewBox="0 0 18 18"><rect x="3" y="6" width="10" height="3" fill="none" stroke="#d0d0d0" stroke-width="1"/><rect x="4" y="9" width="8" height="6" fill="none" stroke="#d0d0d0" stroke-width="1"/><rect x="6.5" y="11" width="3" height="1.2" fill="#d0d0d0"/><circle cx="13" cy="4.5" r="3.6" fill="#e6e6e6"/><path d="M13 2.5 V6.5 M11 4.5 H15" stroke="#4a4a4a" stroke-width="1.1"/></svg><svg style="position:absolute;left:733px;top:121px;" width="14" height="13" viewBox="0 0 14 13"><rect x="0" y="0" width="14" height="4" fill="#e0e0e0"/><rect x="1.5" y="5.5" width="11" height="7" fill="#e0e0e0"/><rect x="5" y="7.3" width="4" height="1.6" fill="#2a2a2a"/></svg><div class="t" style="left:754.3px;top:122.67px;color:#d9d9d9;font-size:11.3px;font-weight:normal;text-shadow:0 1px 1px rgba(0,0,0,0.5);">Scene Collection</div><svg style="position:absolute;left:736px;top:144px;" width="7" height="7" viewBox="0 0 7 7"><path d="M0 0.5 H6.5 L3.25 6.2 Z" fill="#c8c8c8"/></svg><div style="position:absolute;left:750.5px;top:138px;width:19px;height:17.5px;background:#474747;border-radius:4px;box-shadow:inset 0 0 0 1px #5a5a5a"></div><svg style="position:absolute;left:753px;top:140.5px;" width="14" height="13" viewBox="0 0 14 13"><rect x="0" y="0" width="14" height="4" fill="#e0e0e0"/><rect x="1.5" y="5.5" width="11" height="7" fill="#e0e0e0"/><rect x="5" y="7.3" width="4" height="1.6" fill="#2a2a2a"/></svg><div class="t" style="left:774.4px;top:142.87px;color:#d9d9d9;font-size:11.3px;font-weight:normal;text-shadow:0 1px 1px rgba(0,0,0,0.5);">Collection</div><div style="position:absolute;left:739px;top:162px;width:1px;height:49.5px;background:#555555;border-radius:0px;"></div><svg style="position:absolute;left:757px;top:164.0px;" width="7" height="7" viewBox="0 0 7 7"><path d="M0.5 0 V7 L6.2 3.5 Z" fill="#c8c8c8"/></svg><svg style="position:absolute;left:757px;top:184.0px;" width="7" height="7" viewBox="0 0 7 7"><path d="M0.5 0 V7 L6.2 3.5 Z" fill="#c8c8c8"/></svg><svg style="position:absolute;left:757px;top:204.0px;" width="7" height="7" viewBox="0 0 7 7"><path d="M0.5 0 V7 L6.2 3.5 Z" fill="#c8c8c8"/></svg><svg style="position:absolute;left:771px;top:158px;" width="17" height="17" viewBox="0 0 17 17"><circle cx="5" cy="4.5" r="3.3" fill="#e08a4a"/><circle cx="11.5" cy="4" r="3.3" fill="#e08a4a"/><circle cx="5" cy="4.5" r="1" fill="#282828"/><circle cx="11.5" cy="4" r="1" fill="#282828"/><rect x="3" y="8.5" width="9" height="6" fill="#e08a4a"/><path d="M12 11.5 L16 8.5 V14.5 Z" fill="#e08a4a"/><rect x="0.5" y="10" width="2.5" height="2" fill="#e08a4a"/></svg><div class="t" style="left:794.3px;top:162.67px;color:#d9d9d9;font-size:11.3px;font-weight:normal;text-shadow:0 1px 1px rgba(0,0,0,0.5);">Camera</div><div style="position:absolute;left:853px;top:158.3px;width:20px;height:17.5px;background:#474747;border-radius:4px;box-shadow:inset 0 0 0 1px #5a5a5a"></div><svg style="position:absolute;left:853px;top:158px;" width="20" height="18" viewBox="0 0 20 18"><g fill="none" stroke="#1ec69a" stroke-width="1.2"><path d="M3.8 9.2 Q1.8 9.2 1.8 6.6 Q2 4 5 3.9 Q6.8 4 8 3.2 Q9.5 1 12.5 1.1 Q16.3 1.5 16.6 5.3 Q16.8 9.2 13.2 9.2 Z"/><circle cx="12.5" cy="5.2" r="1.3"/><rect x="7.3" y="11.2" width="5.6" height="4.5"/><path d="M4.3 11 V15.2 M4.3 13.2 H7.3 M12.9 13.4 L16.5 11 V15.8 Z"/></g><circle cx="5.6" cy="6.4" r="0.8" fill="#1ec69a"/></svg><div style="position:absolute;left:713px;top:180px;width:14px;height:14px;background:#334d80;border-radius:0px;"></div><svg style="position:absolute;left:712px;top:179px;" width="17" height="17" viewBox="0 0 17 17"><g fill="none" stroke="#c8d0e0" stroke-width="1"><path d="M4.5 3.5 H10 M2.5 5 V11 M4.5 12.5 H10.5 M12.5 6 V11"/><rect x="1.5" y="2" width="2.5" height="2.5"/><rect x="1.5" y="11.2" width="2.5" height="2.5"/><rect x="11.2" y="11.2" width="2.5" height="2.5"/></g><rect x="10" y="1" width="5" height="5" fill="#e6e6e6"/></svg><div style="position:absolute;left:770.3px;top:178px;width:20px;height:18px;background:#5e6f90;border-radius:4px;box-shadow:inset 0 0 0 1px #7080a0"></div><svg style="position:absolute;left:772px;top:179px;" width="17" height="16" viewBox="0 0 17 16"><path d="M2.5 2.5 H14 L8.25 14 Z" fill="none" stroke="#e08a4a" stroke-width="2.6" stroke-linejoin="round"/></svg><div class="t" style="left:794.3px;top:182.47px;color:#ffaf29;font-size:11.3px;font-weight:normal;text-shadow:0 1px 1px rgba(0,0,0,0.5);">Cube</div><div style="position:absolute;left:839.2px;top:178px;width:19.5px;height:18px;background:#2e5d72;border-radius:4px;box-shadow:inset 0 0 0 1px #406a80"></div><svg style="position:absolute;left:840px;top:178px;" width="18" height="18" viewBox="0 0 18 18"><g fill="none" stroke="#2ec4a0" stroke-width="1.2"><path d="M4.5 4 H13.5 M4 5 L8.5 13 M14 5 L9.5 13"/><rect x="2.5" y="2.5" width="3" height="3"/><rect x="12.5" y="2.5" width="3" height="3"/><rect x="7.5" y="12.5" width="3" height="3"/></g></svg><svg style="position:absolute;left:773px;top:199px;" width="14" height="17" viewBox="0 0 14 17"><circle cx="6.5" cy="6" r="5.8" fill="#e08a4a"/><rect x="3.5" y="9" width="6" height="3.5" fill="#e08a4a"/><path d="M4 7 L5.5 9 H7.5 L9 7" fill="none" stroke="#282828" stroke-width="1"/><rect x="4" y="13.5" width="5" height="1.2" fill="#e08a4a"/><rect x="5" y="15.3" width="3" height="1.2" fill="#e08a4a"/></svg><div class="t" style="left:794.3px;top:202.27px;color:#d9d9d9;font-size:11.3px;font-weight:normal;text-shadow:0 1px 1px rgba(0,0,0,0.5);">Light</div><svg style="position:absolute;left:842px;top:199px;" width="14" height="18" viewBox="0 0 14 18"><circle cx="6.8" cy="7.5" r="6" fill="none" stroke="#2ec4a0" stroke-width="1.2"/><circle cx="6.8" cy="7" r="1.5" fill="none" stroke="#2ec4a0" stroke-width="1"/><path d="M6.8 8.5 V17.5" stroke="#2ec4a0" stroke-width="1.1" stroke-dasharray="1.5 1.2"/></svg><svg style="position:absolute;left:963.5px;top:141.5px;" width="11" height="11" viewBox="0 0 11 11"><defs><mask id="ckm"><rect width="11" height="11" fill="#fff"/><path d="M2.3 5.6 L4.6 7.9 L8.8 3.2" fill="none" stroke="#000" stroke-width="2"/></mask></defs><rect x="0" y="0" width="10.5" height="10.5" rx="1" fill="#e6e6e6" mask="url(#ckm)"/></svg><svg style="position:absolute;left:981px;top:141.5px;" width="15" height="12" viewBox="0 0 15 12"><defs><mask id="em0"><rect width="15" height="12" fill="#fff"/><circle cx="7.5" cy="5.8" r="3.2" fill="#000"/><circle cx="7.5" cy="5.8" r="1.5" fill="#fff"/></mask></defs><path d="M0.6 5.8 Q7.5 -2.2 14.4 5.8 Q7.5 13.8 0.6 5.8 Z" fill="#e6e6e6" mask="url(#em0)"/></svg><svg style="position:absolute;left:1001.5px;top:140.5px;" width="14" height="12" viewBox="0 0 14 12"><defs><mask id="cm0"><rect width="14" height="12" fill="#fff"/><circle cx="7" cy="6.4" r="3.9" fill="#000"/><circle cx="7" cy="6.4" r="2.9" fill="#fff"/><circle cx="7" cy="6.4" r="1.9" fill="#000"/></mask></defs><path d="M0.3 2.2 H3.8 L4.8 0.4 H9.2 L10.2 2.2 H13.6 V11.1 H0.3 Z" fill="#e6e6e6" mask="url(#cm0)"/></svg><svg style="position:absolute;left:981px;top:161.5px;" width="15" height="12" viewBox="0 0 15 12"><defs><mask id="em1"><rect width="15" height="12" fill="#fff"/><circle cx="7.5" cy="5.8" r="3.2" fill="#000"/><circle cx="7.5" cy="5.8" r="1.5" fill="#fff"/></mask></defs><path d="M0.6 5.8 Q7.5 -2.2 14.4 5.8 Q7.5 13.8 0.6 5.8 Z" fill="#e6e6e6" mask="url(#em1)"/></svg><svg style="position:absolute;left:1001.5px;top:160.5px;" width="14" height="12" viewBox="0 0 14 12"><defs><mask id="cm1"><rect width="14" height="12" fill="#fff"/><circle cx="7" cy="6.4" r="3.9" fill="#000"/><circle cx="7" cy="6.4" r="2.9" fill="#fff"/><circle cx="7" cy="6.4" r="1.9" fill="#000"/></mask></defs><path d="M0.3 2.2 H3.8 L4.8 0.4 H9.2 L10.2 2.2 H13.6 V11.1 H0.3 Z" fill="#e6e6e6" mask="url(#cm1)"/></svg><svg style="position:absolute;left:981px;top:181.5px;" width="15" height="12" viewBox="0 0 15 12"><defs><mask id="em2"><rect width="15" height="12" fill="#fff"/><circle cx="7.5" cy="5.8" r="3.2" fill="#000"/><circle cx="7.5" cy="5.8" r="1.5" fill="#fff"/></mask></defs><path d="M0.6 5.8 Q7.5 -2.2 14.4 5.8 Q7.5 13.8 0.6 5.8 Z" fill="#e6e6e6" mask="url(#em2)"/></svg><svg style="position:absolute;left:1001.5px;top:180.5px;" width="14" height="12" viewBox="0 0 14 12"><defs><mask id="cm2"><rect width="14" height="12" fill="#fff"/><circle cx="7" cy="6.4" r="3.9" fill="#000"/><circle cx="7" cy="6.4" r="2.9" fill="#fff"/><circle cx="7" cy="6.4" r="1.9" fill="#000"/></mask></defs><path d="M0.3 2.2 H3.8 L4.8 0.4 H9.2 L10.2 2.2 H13.6 V11.1 H0.3 Z" fill="#e6e6e6" mask="url(#cm2)"/></svg><svg style="position:absolute;left:981px;top:201.5px;" width="15" height="12" viewBox="0 0 15 12"><defs><mask id="em3"><rect width="15" height="12" fill="#fff"/><circle cx="7.5" cy="5.8" r="3.2" fill="#000"/><circle cx="7.5" cy="5.8" r="1.5" fill="#fff"/></mask></defs><path d="M0.6 5.8 Q7.5 -2.2 14.4 5.8 Q7.5 13.8 0.6 5.8 Z" fill="#e6e6e6" mask="url(#em3)"/></svg><svg style="position:absolute;left:1001.5px;top:200.5px;" width="14" height="12" viewBox="0 0 14 12"><defs><mask id="cm3"><rect width="14" height="12" fill="#fff"/><circle cx="7" cy="6.4" r="3.9" fill="#000"/><circle cx="7" cy="6.4" r="2.9" fill="#fff"/><circle cx="7" cy="6.4" r="1.9" fill="#000"/></mask></defs><path d="M0.3 2.2 H3.8 L4.8 0.4 H9.2 L10.2 2.2 H13.6 V11.1 H0.3 Z" fill="#e6e6e6" mask="url(#cm3)"/></svg><div style="position:absolute;left:719px;top:406.5px;width:30.5px;height:19.5px;background:#2a2a2a;border-radius:4px;box-shadow:inset 0 0 0 1px #383838"></div><svg style="position:absolute;left:722px;top:408px;" width="28" height="17" viewBox="0 0 28 17"><rect x="1.5" y="1.5" width="13" height="5.5" rx="2.75" fill="#e6e6e6"/><rect x="7" y="2.8" width="6" height="3" fill="#282828"/><rect x="1.5" y="9" width="13" height="5.5" rx="2.75" fill="#e6e6e6"/><rect x="9.5" y="10.3" width="3.5" height="3" fill="#282828"/><path d="M18 7 L20.5 9.5 L23 7" fill="none" stroke="#e6e6e6" stroke-width="1.1"/></svg><div style="position:absolute;left:815.5px;top:406.5px;width:110px;height:19.5px;background:#1d1d1d;border-radius:4px;box-shadow:inset 0 0 0 1px #303030"></div><svg style="position:absolute;left:818px;top:408px;" width="17" height="17" viewBox="0 0 17 17"><circle cx="9.5" cy="6.5" r="4.3" fill="none" stroke="#e6e6e6" stroke-width="1.2"/><path d="M6.5 9.5 L2.5 13.5" stroke="#e6e6e6" stroke-width="1.4"/></svg><div style="position:absolute;left:1000.5px;top:406.5px;width:19px;height:19.5px;background:#2a2a2a;border-radius:4px;box-shadow:inset 0 0 0 1px #383838"></div><svg style="position:absolute;left:1003px;top:409px;" width="14" height="14" viewBox="0 0 14 14"><path d="M3.5 5.5 L7 9 L10.5 5.5" fill="none" stroke="#e6e6e6" stroke-width="1.2"/></svg><div style="position:absolute;left:712px;top:657.7px;width:26.3px;height:26px;background:#2e2e2e;border-radius:0px;border-radius:5px 0 0 5px"></div><div style="position:absolute;left:716px;top:465px;width:20px;height:1px;background:#282828;border-radius:0px;"></div><div style="position:absolute;left:716px;top:612.5px;width:20px;height:1px;background:#282828;border-radius:0px;"></div><svg style="position:absolute;left:716px;top:442px;" width="18" height="18" viewBox="0 0 18 18"><rect x="4.1" y="2" width="1.1" height="6.5" fill="#b4b4b4"/><rect x="2.4" y="8.6" width="4.5" height="1.3" fill="#b4b4b4"/><ellipse cx="4.6" cy="12.7" rx="2.6" ry="3" fill="#b4b4b4"/><path d="M9.5 2 V4.5 Q9.5 6.5 11.8 7.2 V14.6 Q11.8 16 12.8 16 Q13.8 16 13.8 14.6 V7.2 Q16.2 6.5 16.2 4.5 V2 L15 2.6 V4.5 Q15 5.5 12.8 5.5 Q10.7 5.5 10.7 4.5 V2.6 Z" fill="#b4b4b4"/><circle cx="12.8" cy="14.6" r="0.5" fill="#1f1f1f"/></svg><svg style="position:absolute;left:716px;top:477px;" width="18" height="18" viewBox="0 0 18 18"><path d="M1.9 5 H5 L6 3 H10.5 L11.5 5 H16.2 V16.3 H1.9 Z" fill="#b4b4b4"/><rect x="3.5" y="7" width="8.5" height="7.5" fill="#1f1f1f"/><path d="M4.3 8.8 H11.2 M4.3 10.8 H11.2 M4.3 12.8 H11.2" stroke="#b4b4b4" stroke-width="0.9"/><rect x="13" y="7.5" width="1.8" height="1.8" fill="#1f1f1f"/><rect x="13" y="11.3" width="1.8" height="1.8" fill="#1f1f1f"/><rect x="7.5" y="3.8" width="1.8" height="1" fill="#1f1f1f"/><rect x="12.5" y="2.6" width="2.5" height="1" fill="#b4b4b4"/></svg><svg style="position:absolute;left:716px;top:506px;" width="18" height="18" viewBox="0 0 18 18"><rect x="1.9" y="2.1" width="14.2" height="7.8" rx="1.6" fill="#b4b4b4"/><rect x="4.9" y="6.6" width="8.1" height="9.3" fill="#1f1f1f"/><rect x="4.9" y="6.6" width="8.1" height="9.3" fill="#8e8e8e"/><path d="M6.2 14.6 L8.5 11 L10.8 14.6 Z" fill="#1f1f1f"/><rect x="10.6" y="8" width="1.3" height="1.3" fill="#1f1f1f"/></svg><svg style="position:absolute;left:716px;top:534px;" width="18" height="18" viewBox="0 0 18 18"><rect x="6.5" y="1.9" width="9.5" height="9.8" fill="none" stroke="#b4b4b4" stroke-width="1.3"/><path d="M7.3 11 L10.6 5.5 L13.2 11 Z" fill="#b4b4b4"/><rect x="12.5" y="3.8" width="1.6" height="1.6" fill="#b4b4b4"/><path d="M4.6 4.5 V13.6 H13.6 M2.3 6.6 V15.9 H11.6" fill="none" stroke="#9a9a9a" stroke-width="1"/></svg><svg style="position:absolute;left:716px;top:561px;" width="18" height="18" viewBox="0 0 18 18"><path d="M6 2.7 L1.9 12.5 Q1.9 14.9 4.5 14.9 L7.5 14.9 L9 9.8 Z" fill="#b4b4b4"/><circle cx="13.8" cy="5" r="2" fill="#b4b4b4"/><circle cx="11.9" cy="13" r="3.7" fill="#1f1f1f" stroke="#b4b4b4" stroke-width="1.2"/><path d="M10.5 12.2 L11.5 11.2" stroke="#b4b4b4" stroke-width="0.8"/></svg><svg style="position:absolute;left:716px;top:590px;" width="18" height="18" viewBox="0 0 18 18"><circle cx="8.8" cy="9" r="6" fill="none" stroke="#b5585f" stroke-width="1.3"/><path d="M4 6.5 Q6 3.5 9 3.6 Q10 5 9.5 6.5 Q8 7 7.2 8.5 Q5 9 4.7 11 Q3.2 9 4 6.5 Z" fill="#b5585f"/><path d="M8 10.2 Q10.5 9.8 12.5 11 Q12 13.5 9.8 14.5 Q8.5 12.5 8 10.2 Z" fill="#b5585f"/><path d="M1.6 16.3 L4 13.9 M13.6 4 L16 1.6" stroke="#b5585f" stroke-width="1.3"/></svg><svg style="position:absolute;left:716px;top:626px;" width="18" height="18" viewBox="0 0 18 18"><rect x="2.5" y="3.2" width="13" height="3" fill="none" stroke="#e0e0e0" stroke-width="1.2"/><rect x="3.2" y="6.2" width="11.6" height="9.3" fill="none" stroke="#e0e0e0" stroke-width="1.2"/><rect x="7.3" y="8.5" width="3.4" height="1.6" fill="#e0e0e0"/></svg><svg style="position:absolute;left:716px;top:661.5px;" width="18" height="18" viewBox="0 0 18 18"><rect x="4.9" y="4.9" width="8.3" height="8.3" fill="#e6964f"/><path d="M2.4 5.2 V2.4 H5.2 M12.8 2.4 H15.6 V5.2 M15.6 12.8 V15.6 H12.8 M5.2 15.6 H2.4 V12.8" fill="none" stroke="#d08040" stroke-width="1.1"/></svg><svg style="position:absolute;left:716px;top:689px;" width="18" height="18" viewBox="0 0 18 18"><path d="M3 15.2 L9.5 8.7" stroke="#5b8ee0" stroke-width="3.3" stroke-linecap="round"/><path d="M8.3 9.5 A5 5 0 0 1 13 2.3 L10.8 5.3 L12.8 7.3 L15.8 5 A5 5 0 0 1 8.3 9.5 Z" fill="#5b8ee0"/></svg><svg style="position:absolute;left:716px;top:718px;" width="18" height="18" viewBox="0 0 18 18"><path d="M4.7 4.7 H14.8 M4.7 4.7 V14.4 M4.7 4.7 L14.1 14.4" stroke="#5b8ee0" stroke-width="1"/><circle cx="4.7" cy="4.7" r="2.6" fill="#5b8ee0"/><circle cx="14.8" cy="4.7" r="1.3" fill="#5b8ee0"/><circle cx="4.7" cy="14.4" r="1.5" fill="#5b8ee0"/><circle cx="14.1" cy="14.4" r="2" fill="#5b8ee0"/></svg><svg style="position:absolute;left:716px;top:745px;" width="18" height="18" viewBox="0 0 18 18"><circle cx="9" cy="9.8" r="3" fill="#5b8ee0"/><circle cx="14.1" cy="4.9" r="1.8" fill="#5b8ee0"/><path d="M10.5 3.3 A6.3 6.3 0 1 0 15.1 12.5" fill="none" stroke="#5b8ee0" stroke-width="1.1"/></svg><svg style="position:absolute;left:716px;top:774px;" width="18" height="18" viewBox="0 0 18 18"><path d="M3.5 13.5 Q1 9.5 4.5 6.8 L12.5 2.3 Q15.8 1 15.7 4.2 L12.8 12.5 Q9.5 17.5 3.5 13.5 Z" fill="none" stroke="#5b8ee0" stroke-width="1.1"/><circle cx="7.4" cy="10.5" r="3.4" fill="none" stroke="#5b8ee0" stroke-width="1.4"/><circle cx="7.4" cy="10.5" r="1.3" fill="#5b8ee0"/><circle cx="13.2" cy="4.6" r="1" fill="none" stroke="#5b8ee0" stroke-width="0.8"/></svg><svg style="position:absolute;left:716px;top:801px;" width="18" height="18" viewBox="0 0 18 18"><g fill="none" stroke="#22c49a" stroke-width="1.3"><path d="M5.2 4.5 H12.7 M4 5.8 L8 12.9 M14 5.8 L10 12.9"/><rect x="2.2" y="3.2" width="3" height="3"/><rect x="12.7" y="3.2" width="3" height="3"/><rect x="7.5" y="12.9" width="3" height="3"/></g></svg><svg style="position:absolute;left:716px;top:830px;" width="18" height="18" viewBox="0 0 18 18"><circle cx="9" cy="9" r="7.2" fill="#b5585f"/><path d="M9.3 2.8 V9 Q12 9.3 15 7.8 Q14 4 9.3 2.8 Z" fill="#1f1f1f"/><path d="M8.7 15.2 V9.6 Q6 9.4 3 7.6 Q3 12 8.7 15.2 Z" fill="#1f1f1f"/></svg><svg style="position:absolute;left:748px;top:439px;" width="16" height="16" viewBox="0 0 16 16"><rect x="3.5" y="3.5" width="9" height="9" fill="#e6e6e6"/><path d="M1 4 V1 H4 M12 1 H15 V4 M15 12 V15 H12 M4 15 H1 V12" fill="none" stroke="#d0d0d0" stroke-width="1"/></svg><div class="t" style="left:772.2px;top:441.67px;color:#e6e6e6;font-size:11.3px;font-weight:normal;text-shadow:0 1px 1px rgba(0,0,0,0.5);">Cube</div><svg style="position:absolute;left:1004px;top:439px;" width="16" height="16" viewBox="0 0 16 16"><path d="M9 2 L14 7 L12.5 8 L10 7.5 L8 10 L8.5 12.5 L7.5 13.5 L2.5 8.5 L3.5 7.5 L6 8 L8 5.5 L7.5 3 Z" fill="none" stroke="#d0d0d0" stroke-width="1"/><path d="M5 11 L1 15" stroke="#d0d0d0" stroke-width="1"/></svg><div style="position:absolute;left:746.6px;top:474px;width:274px;height:18.5px;background:#1d1d1d;border-radius:4px;box-shadow:inset 0 0 0 1px #2a2a2a"></div><div style="position:absolute;left:746.6px;top:474px;width:31px;height:18.5px;background:#2a2a2a;border-radius:0px;border-radius:4px 0 0 4px;box-shadow:inset 1px 1px 0 #353535"></div><div style="position:absolute;left:777.5px;top:474px;width:1px;height:18.5px;background:#383838;border-radius:0px;"></div><svg style="position:absolute;left:750px;top:475px;" width="26" height="17" viewBox="0 0 26 17"><rect x="3.5" y="4" width="8.5" height="8.5" fill="#e6e6e6"/><path d="M1 4 V1.2 H4 M11.5 1.2 H14.5 V4 M14.5 12.5 V15.3 H11.5 M4 15.3 H1 V12.5" fill="none" stroke="#d0d0d0" stroke-width="1"/><path d="M17.5 7.5 L20 10 L22.5 7.5" fill="none" stroke="#e6e6e6" stroke-width="1.1"/></svg><div class="t" style="left:784px;top:478.17px;color:#e6e6e6;font-size:11.3px;font-weight:normal;text-shadow:0 1px 1px rgba(0,0,0,0.5);">Cube</div><div style="position:absolute;left:746px;top:503px;width:275px;height:281px;background:#3d3d3d;border-radius:4px;"></div><svg style="position:absolute;left:752px;top:509px;" width="14" height="14" viewBox="0 0 14 14"><path d="M2 4.5 L7 9.5 L12 4.5" fill="none" stroke="#d0d0d0" stroke-width="1"/></svg><div class="t" style="left:768.3px;top:510.67px;color:#e6e6e6;font-size:11.3px;font-weight:normal;text-shadow:0 1px 1px rgba(0,0,0,0.5);">Transform</div><svg style="position:absolute;left:1004px;top:514px;" width="12" height="5" viewBox="0 0 12 5"><rect x="0" y="0" width="1.3" height="1.3" fill="#1a1a1a"/><rect x="0" y="3" width="1.3" height="1.3" fill="#1a1a1a"/><rect x="3" y="0" width="1.3" height="1.3" fill="#1a1a1a"/><rect x="3" y="3" width="1.3" height="1.3" fill="#1a1a1a"/><rect x="6" y="0" width="1.3" height="1.3" fill="#1a1a1a"/><rect x="6" y="3" width="1.3" height="1.3" fill="#1a1a1a"/><rect x="9" y="0" width="1.3" height="1.3" fill="#1a1a1a"/><rect x="9" y="3" width="1.3" height="1.3" fill="#1a1a1a"/></svg><div style="position:absolute;left:855px;top:537.0px;width:117px;height:18.6px;background:#545454;border-radius:0px;border-radius:3px 3px 0 0"></div><div class="t" style="right:183.5px;top:540.87px;color:#e6e6e6;font-size:11.3px;font-weight:normal;text-align:right;text-shadow:0 1px 1px rgba(0,0,0,0.5);">Location X</div><div class="t" style="left:813.5px;width:200px;top:540.87px;color:#e6e6e6;font-size:11.3px;font-weight:normal;text-align:center;text-shadow:0 1px 1px rgba(0,0,0,0.5);">0 m</div><svg style="position:absolute;left:975px;top:538.3px;" width="16" height="16" viewBox="0 0 16 16"><path d="M2.5 7 V4.5 A3 3 0 0 1 8.5 4.5" fill="none" stroke="#cfcfcf" stroke-width="1.1"/><rect x="5.5" y="7.5" width="9" height="6.5" fill="none" stroke="#cfcfcf" stroke-width="1.1"/><rect x="9.4" y="10" width="1.2" height="1.6" fill="#cfcfcf"/></svg><svg style="position:absolute;left:999px;top:542.3px;" width="8" height="8" viewBox="0 0 8 8"><circle cx="4" cy="4" r="2.3" fill="#dcdcdc"/></svg><div style="position:absolute;left:855px;top:556.6px;width:117px;height:18.6px;background:#545454;border-radius:0px;border-radius:0"></div><div class="t" style="right:183.5px;top:560.47px;color:#e6e6e6;font-size:11.3px;font-weight:normal;text-align:right;text-shadow:0 1px 1px rgba(0,0,0,0.5);">Y</div><div class="t" style="left:813.5px;width:200px;top:560.47px;color:#e6e6e6;font-size:11.3px;font-weight:normal;text-align:center;text-shadow:0 1px 1px rgba(0,0,0,0.5);">0 m</div><svg style="position:absolute;left:975px;top:557.9px;" width="16" height="16" viewBox="0 0 16 16"><path d="M2.5 7 V4.5 A3 3 0 0 1 8.5 4.5" fill="none" stroke="#cfcfcf" stroke-width="1.1"/><rect x="5.5" y="7.5" width="9" height="6.5" fill="none" stroke="#cfcfcf" stroke-width="1.1"/><rect x="9.4" y="10" width="1.2" height="1.6" fill="#cfcfcf"/></svg><svg style="position:absolute;left:999px;top:561.9px;" width="8" height="8" viewBox="0 0 8 8"><circle cx="4" cy="4" r="2.3" fill="#dcdcdc"/></svg><div style="position:absolute;left:855px;top:576.2px;width:117px;height:18.6px;background:#545454;border-radius:0px;border-radius:0 0 3px 3px"></div><div class="t" style="right:183.5px;top:580.07px;color:#e6e6e6;font-size:11.3px;font-weight:normal;text-align:right;text-shadow:0 1px 1px rgba(0,0,0,0.5);">Z</div><div class="t" style="left:813.5px;width:200px;top:580.07px;color:#e6e6e6;font-size:11.3px;font-weight:normal;text-align:center;text-shadow:0 1px 1px rgba(0,0,0,0.5);">0 m</div><svg style="position:absolute;left:975px;top:577.5px;" width="16" height="16" viewBox="0 0 16 16"><path d="M2.5 7 V4.5 A3 3 0 0 1 8.5 4.5" fill="none" stroke="#cfcfcf" stroke-width="1.1"/><rect x="5.5" y="7.5" width="9" height="6.5" fill="none" stroke="#cfcfcf" stroke-width="1.1"/><rect x="9.4" y="10" width="1.2" height="1.6" fill="#cfcfcf"/></svg><svg style="position:absolute;left:999px;top:581.5px;" width="8" height="8" viewBox="0 0 8 8"><circle cx="4" cy="4" r="2.3" fill="#dcdcdc"/></svg><div style="position:absolute;left:855px;top:602.0px;width:117px;height:18.6px;background:#545454;border-radius:0px;border-radius:3px 3px 0 0"></div><div class="t" style="right:183.5px;top:605.87px;color:#e6e6e6;font-size:11.3px;font-weight:normal;text-align:right;text-shadow:0 1px 1px rgba(0,0,0,0.5);">Rotation X</div><div class="t" style="left:813.5px;width:200px;top:605.87px;color:#e6e6e6;font-size:11.3px;font-weight:normal;text-align:center;text-shadow:0 1px 1px rgba(0,0,0,0.5);">0°</div><svg style="position:absolute;left:975px;top:603.3px;" width="16" height="16" viewBox="0 0 16 16"><path d="M2.5 7 V4.5 A3 3 0 0 1 8.5 4.5" fill="none" stroke="#cfcfcf" stroke-width="1.1"/><rect x="5.5" y="7.5" width="9" height="6.5" fill="none" stroke="#cfcfcf" stroke-width="1.1"/><rect x="9.4" y="10" width="1.2" height="1.6" fill="#cfcfcf"/></svg><svg style="position:absolute;left:999px;top:607.3px;" width="8" height="8" viewBox="0 0 8 8"><circle cx="4" cy="4" r="2.3" fill="#dcdcdc"/></svg><div style="position:absolute;left:855px;top:621.6px;width:117px;height:18.6px;background:#545454;border-radius:0px;border-radius:0"></div><div class="t" style="right:183.5px;top:625.47px;color:#e6e6e6;font-size:11.3px;font-weight:normal;text-align:right;text-shadow:0 1px 1px rgba(0,0,0,0.5);">Y</div><div class="t" style="left:813.5px;width:200px;top:625.47px;color:#e6e6e6;font-size:11.3px;font-weight:normal;text-align:center;text-shadow:0 1px 1px rgba(0,0,0,0.5);">0°</div><svg style="position:absolute;left:975px;top:622.9px;" width="16" height="16" viewBox="0 0 16 16"><path d="M2.5 7 V4.5 A3 3 0 0 1 8.5 4.5" fill="none" stroke="#cfcfcf" stroke-width="1.1"/><rect x="5.5" y="7.5" width="9" height="6.5" fill="none" stroke="#cfcfcf" stroke-width="1.1"/><rect x="9.4" y="10" width="1.2" height="1.6" fill="#cfcfcf"/></svg><svg style="position:absolute;left:999px;top:626.9px;" width="8" height="8" viewBox="0 0 8 8"><circle cx="4" cy="4" r="2.3" fill="#dcdcdc"/></svg><div style="position:absolute;left:855px;top:641.2px;width:117px;height:18.6px;background:#545454;border-radius:0px;border-radius:0 0 3px 3px"></div><div class="t" style="right:183.5px;top:645.07px;color:#e6e6e6;font-size:11.3px;font-weight:normal;text-align:right;text-shadow:0 1px 1px rgba(0,0,0,0.5);">Z</div><div class="t" style="left:813.5px;width:200px;top:645.07px;color:#e6e6e6;font-size:11.3px;font-weight:normal;text-align:center;text-shadow:0 1px 1px rgba(0,0,0,0.5);">0°</div><svg style="position:absolute;left:975px;top:642.5px;" width="16" height="16" viewBox="0 0 16 16"><path d="M2.5 7 V4.5 A3 3 0 0 1 8.5 4.5" fill="none" stroke="#cfcfcf" stroke-width="1.1"/><rect x="5.5" y="7.5" width="9" height="6.5" fill="none" stroke="#cfcfcf" stroke-width="1.1"/><rect x="9.4" y="10" width="1.2" height="1.6" fill="#cfcfcf"/></svg><svg style="position:absolute;left:999px;top:646.5px;" width="8" height="8" viewBox="0 0 8 8"><circle cx="4" cy="4" r="2.3" fill="#dcdcdc"/></svg><div style="position:absolute;left:855px;top:667px;width:117px;height:18px;background:#282828;border-radius:3px;"></div><div class="t" style="right:183.5px;top:670.17px;color:#e6e6e6;font-size:11.3px;font-weight:normal;text-align:right;text-shadow:0 1px 1px rgba(0,0,0,0.5);">Mode</div><div class="t" style="left:861.5px;top:670.17px;color:#e6e6e6;font-size:11.3px;font-weight:normal;text-shadow:0 1px 1px rgba(0,0,0,0.5);">XYZ Euler</div><svg style="position:absolute;left:957px;top:670px;" width="12" height="12" viewBox="0 0 12 12"><path d="M2.5 4.5 L6 8 L9.5 4.5" fill="none" stroke="#e6e6e6" stroke-width="1.2"/></svg><svg style="position:absolute;left:999px;top:671.5px;" width="8" height="8" viewBox="0 0 8 8"><circle cx="4" cy="4" r="2.3" fill="#dcdcdc"/></svg><div style="position:absolute;left:855px;top:692.0px;width:117px;height:18.6px;background:#545454;border-radius:0px;border-radius:3px 3px 0 0"></div><div class="t" style="right:183.5px;top:695.87px;color:#e6e6e6;font-size:11.3px;font-weight:normal;text-align:right;text-shadow:0 1px 1px rgba(0,0,0,0.5);">Scale X</div><div class="t" style="left:813.5px;width:200px;top:695.87px;color:#e6e6e6;font-size:11.3px;font-weight:normal;text-align:center;text-shadow:0 1px 1px rgba(0,0,0,0.5);">1.000</div><svg style="position:absolute;left:975px;top:693.3px;" width="16" height="16" viewBox="0 0 16 16"><path d="M2.5 7 V4.5 A3 3 0 0 1 8.5 4.5" fill="none" stroke="#cfcfcf" stroke-width="1.1"/><rect x="5.5" y="7.5" width="9" height="6.5" fill="none" stroke="#cfcfcf" stroke-width="1.1"/><rect x="9.4" y="10" width="1.2" height="1.6" fill="#cfcfcf"/></svg><svg style="position:absolute;left:999px;top:697.3px;" width="8" height="8" viewBox="0 0 8 8"><circle cx="4" cy="4" r="2.3" fill="#dcdcdc"/></svg><div style="position:absolute;left:855px;top:711.6px;width:117px;height:18.6px;background:#545454;border-radius:0px;border-radius:0"></div><div class="t" style="right:183.5px;top:715.47px;color:#e6e6e6;font-size:11.3px;font-weight:normal;text-align:right;text-shadow:0 1px 1px rgba(0,0,0,0.5);">Y</div><div class="t" style="left:813.5px;width:200px;top:715.47px;color:#e6e6e6;font-size:11.3px;font-weight:normal;text-align:center;text-shadow:0 1px 1px rgba(0,0,0,0.5);">1.000</div><svg style="position:absolute;left:975px;top:712.9px;" width="16" height="16" viewBox="0 0 16 16"><path d="M2.5 7 V4.5 A3 3 0 0 1 8.5 4.5" fill="none" stroke="#cfcfcf" stroke-width="1.1"/><rect x="5.5" y="7.5" width="9" height="6.5" fill="none" stroke="#cfcfcf" stroke-width="1.1"/><rect x="9.4" y="10" width="1.2" height="1.6" fill="#cfcfcf"/></svg><svg style="position:absolute;left:999px;top:716.9px;" width="8" height="8" viewBox="0 0 8 8"><circle cx="4" cy="4" r="2.3" fill="#dcdcdc"/></svg><div style="position:absolute;left:855px;top:731.2px;width:117px;height:18.6px;background:#545454;border-radius:0px;border-radius:0 0 3px 3px"></div><div class="t" style="right:183.5px;top:735.07px;color:#e6e6e6;font-size:11.3px;font-weight:normal;text-align:right;text-shadow:0 1px 1px rgba(0,0,0,0.5);">Z</div><div class="t" style="left:813.5px;width:200px;top:735.07px;color:#e6e6e6;font-size:11.3px;font-weight:normal;text-align:center;text-shadow:0 1px 1px rgba(0,0,0,0.5);">1.000</div><svg style="position:absolute;left:975px;top:732.5px;" width="16" height="16" viewBox="0 0 16 16"><path d="M2.5 7 V4.5 A3 3 0 0 1 8.5 4.5" fill="none" stroke="#cfcfcf" stroke-width="1.1"/><rect x="5.5" y="7.5" width="9" height="6.5" fill="none" stroke="#cfcfcf" stroke-width="1.1"/><rect x="9.4" y="10" width="1.2" height="1.6" fill="#cfcfcf"/></svg><svg style="position:absolute;left:999px;top:736.5px;" width="8" height="8" viewBox="0 0 8 8"><circle cx="4" cy="4" r="2.3" fill="#dcdcdc"/></svg><svg style="position:absolute;left:767px;top:765px;" width="14" height="14" viewBox="0 0 14 14"><path d="M4.5 2 L9.5 7 L4.5 12" fill="none" stroke="#d0d0d0" stroke-width="1"/></svg><div class="t" style="left:782.5px;top:766.67px;color:#e6e6e6;font-size:11.3px;font-weight:normal;text-shadow:0 1px 1px rgba(0,0,0,0.5);">Delta Transform</div><div style="position:absolute;left:746px;top:786px;width:275px;height:25px;background:#3d3d3d;border-radius:4px;"></div><svg style="position:absolute;left:753px;top:791.5px;" width="14" height="14" viewBox="0 0 14 14"><path d="M4.5 2 L9.5 7 L4.5 12" fill="none" stroke="#d0d0d0" stroke-width="1"/></svg><div class="t" style="left:768.6px;top:793.67px;color:#e6e6e6;font-size:11.3px;font-weight:normal;text-shadow:0 1px 1px rgba(0,0,0,0.5);">Relations</div><svg style="position:absolute;left:1004px;top:796.5px;" width="12" height="5" viewBox="0 0 12 5"><rect x="0" y="0" width="1.3" height="1.3" fill="#1a1a1a"/><rect x="0" y="3" width="1.3" height="1.3" fill="#1a1a1a"/><rect x="3" y="0" width="1.3" height="1.3" fill="#1a1a1a"/><rect x="3" y="3" width="1.3" height="1.3" fill="#1a1a1a"/><rect x="6" y="0" width="1.3" height="1.3" fill="#1a1a1a"/><rect x="6" y="3" width="1.3" height="1.3" fill="#1a1a1a"/><rect x="9" y="0" width="1.3" height="1.3" fill="#1a1a1a"/><rect x="9" y="3" width="1.3" height="1.3" fill="#1a1a1a"/></svg><div style="position:absolute;left:746px;top:813px;width:275px;height:25px;background:#3d3d3d;border-radius:4px;"></div><svg style="position:absolute;left:753px;top:818.5px;" width="14" height="14" viewBox="0 0 14 14"><path d="M4.5 2 L9.5 7 L4.5 12" fill="none" stroke="#d0d0d0" stroke-width="1"/></svg><div class="t" style="left:768.6px;top:820.67px;color:#e6e6e6;font-size:11.3px;font-weight:normal;text-shadow:0 1px 1px rgba(0,0,0,0.5);">Collections</div><svg style="position:absolute;left:1004px;top:823.5px;" width="12" height="5" viewBox="0 0 12 5"><rect x="0" y="0" width="1.3" height="1.3" fill="#1a1a1a"/><rect x="0" y="3" width="1.3" height="1.3" fill="#1a1a1a"/><rect x="3" y="0" width="1.3" height="1.3" fill="#1a1a1a"/><rect x="3" y="3" width="1.3" height="1.3" fill="#1a1a1a"/><rect x="6" y="0" width="1.3" height="1.3" fill="#1a1a1a"/><rect x="6" y="3" width="1.3" height="1.3" fill="#1a1a1a"/><rect x="9" y="0" width="1.3" height="1.3" fill="#1a1a1a"/><rect x="9" y="3" width="1.3" height="1.3" fill="#1a1a1a"/></svg><div style="position:absolute;left:746px;top:840px;width:275px;height:25px;background:#3d3d3d;border-radius:4px;"></div><svg style="position:absolute;left:753px;top:845.5px;" width="14" height="14" viewBox="0 0 14 14"><path d="M4.5 2 L9.5 7 L4.5 12" fill="none" stroke="#d0d0d0" stroke-width="1"/></svg><div class="t" style="left:768.6px;top:847.67px;color:#e6e6e6;font-size:11.3px;font-weight:normal;text-shadow:0 1px 1px rgba(0,0,0,0.5);">Instancing</div><svg style="position:absolute;left:1004px;top:850.5px;" width="12" height="5" viewBox="0 0 12 5"><rect x="0" y="0" width="1.3" height="1.3" fill="#1a1a1a"/><rect x="0" y="3" width="1.3" height="1.3" fill="#1a1a1a"/><rect x="3" y="0" width="1.3" height="1.3" fill="#1a1a1a"/><rect x="3" y="3" width="1.3" height="1.3" fill="#1a1a1a"/><rect x="6" y="0" width="1.3" height="1.3" fill="#1a1a1a"/><rect x="6" y="3" width="1.3" height="1.3" fill="#1a1a1a"/><rect x="9" y="0" width="1.3" height="1.3" fill="#1a1a1a"/><rect x="9" y="3" width="1.3" height="1.3" fill="#1a1a1a"/></svg><div style="position:absolute;left:746px;top:867px;width:275px;height:25px;background:#3d3d3d;border-radius:4px;"></div><svg style="position:absolute;left:753px;top:872.5px;" width="14" height="14" viewBox="0 0 14 14"><path d="M4.5 2 L9.5 7 L4.5 12" fill="none" stroke="#d0d0d0" stroke-width="1"/></svg><div class="t" style="left:768.6px;top:874.67px;color:#e6e6e6;font-size:11.3px;font-weight:normal;text-shadow:0 1px 1px rgba(0,0,0,0.5);">Motion Paths</div><svg style="position:absolute;left:1004px;top:877.5px;" width="12" height="5" viewBox="0 0 12 5"><rect x="0" y="0" width="1.3" height="1.3" fill="#1a1a1a"/><rect x="0" y="3" width="1.3" height="1.3" fill="#1a1a1a"/><rect x="3" y="0" width="1.3" height="1.3" fill="#1a1a1a"/><rect x="3" y="3" width="1.3" height="1.3" fill="#1a1a1a"/><rect x="6" y="0" width="1.3" height="1.3" fill="#1a1a1a"/><rect x="6" y="3" width="1.3" height="1.3" fill="#1a1a1a"/><rect x="9" y="0" width="1.3" height="1.3" fill="#1a1a1a"/><rect x="9" y="3" width="1.3" height="1.3" fill="#1a1a1a"/></svg><div style="position:absolute;left:746px;top:894px;width:275px;height:25px;background:#3d3d3d;border-radius:4px;"></div><svg style="position:absolute;left:753px;top:899.5px;" width="14" height="14" viewBox="0 0 14 14"><path d="M4.5 2 L9.5 7 L4.5 12" fill="none" stroke="#d0d0d0" stroke-width="1"/></svg><div class="t" style="left:768.6px;top:901.67px;color:#e6e6e6;font-size:11.3px;font-weight:normal;text-shadow:0 1px 1px rgba(0,0,0,0.5);">Visibility</div><svg style="position:absolute;left:1004px;top:904.5px;" width="12" height="5" viewBox="0 0 12 5"><rect x="0" y="0" width="1.3" height="1.3" fill="#1a1a1a"/><rect x="0" y="3" width="1.3" height="1.3" fill="#1a1a1a"/><rect x="3" y="0" width="1.3" height="1.3" fill="#1a1a1a"/><rect x="3" y="3" width="1.3" height="1.3" fill="#1a1a1a"/><rect x="6" y="0" width="1.3" height="1.3" fill="#1a1a1a"/><rect x="6" y="3" width="1.3" height="1.3" fill="#1a1a1a"/><rect x="9" y="0" width="1.3" height="1.3" fill="#1a1a1a"/><rect x="9" y="3" width="1.3" height="1.3" fill="#1a1a1a"/></svg><div style="position:absolute;left:746px;top:921px;width:275px;height:25px;background:#3d3d3d;border-radius:4px;"></div><svg style="position:absolute;left:753px;top:926.5px;" width="14" height="14" viewBox="0 0 14 14"><path d="M4.5 2 L9.5 7 L4.5 12" fill="none" stroke="#d0d0d0" stroke-width="1"/></svg><div class="t" style="left:768.6px;top:928.67px;color:#e6e6e6;font-size:11.3px;font-weight:normal;text-shadow:0 1px 1px rgba(0,0,0,0.5);">Viewport Display</div><svg style="position:absolute;left:1004px;top:931.5px;" width="12" height="5" viewBox="0 0 12 5"><rect x="0" y="0" width="1.3" height="1.3" fill="#1a1a1a"/><rect x="0" y="3" width="1.3" height="1.3" fill="#1a1a1a"/><rect x="3" y="0" width="1.3" height="1.3" fill="#1a1a1a"/><rect x="3" y="3" width="1.3" height="1.3" fill="#1a1a1a"/><rect x="6" y="0" width="1.3" height="1.3" fill="#1a1a1a"/><rect x="6" y="3" width="1.3" height="1.3" fill="#1a1a1a"/><rect x="9" y="0" width="1.3" height="1.3" fill="#1a1a1a"/><rect x="9" y="3" width="1.3" height="1.3" fill="#1a1a1a"/></svg><div style="position:absolute;left:746px;top:948px;width:275px;height:25px;background:#3d3d3d;border-radius:4px;"></div><svg style="position:absolute;left:753px;top:953.5px;" width="14" height="14" viewBox="0 0 14 14"><path d="M4.5 2 L9.5 7 L4.5 12" fill="none" stroke="#d0d0d0" stroke-width="1"/></svg><div class="t" style="left:768.6px;top:955.67px;color:#e6e6e6;font-size:11.3px;font-weight:normal;text-shadow:0 1px 1px rgba(0,0,0,0.5);">Line Art</div><svg style="position:absolute;left:1004px;top:958.5px;" width="12" height="5" viewBox="0 0 12 5"><rect x="0" y="0" width="1.3" height="1.3" fill="#1a1a1a"/><rect x="0" y="3" width="1.3" height="1.3" fill="#1a1a1a"/><rect x="3" y="0" width="1.3" height="1.3" fill="#1a1a1a"/><rect x="3" y="3" width="1.3" height="1.3" fill="#1a1a1a"/><rect x="6" y="0" width="1.3" height="1.3" fill="#1a1a1a"/><rect x="6" y="3" width="1.3" height="1.3" fill="#1a1a1a"/><rect x="9" y="0" width="1.3" height="1.3" fill="#1a1a1a"/><rect x="9" y="3" width="1.3" height="1.3" fill="#1a1a1a"/></svg><div style="position:absolute;left:746px;top:975px;width:275px;height:25px;background:#3d3d3d;border-radius:4px;"></div><svg style="position:absolute;left:753px;top:980.5px;" width="14" height="14" viewBox="0 0 14 14"><path d="M4.5 2 L9.5 7 L4.5 12" fill="none" stroke="#d0d0d0" stroke-width="1"/></svg><div class="t" style="left:768.6px;top:982.67px;color:#e6e6e6;font-size:11.3px;font-weight:normal;text-shadow:0 1px 1px rgba(0,0,0,0.5);">Custom Properties</div><svg style="position:absolute;left:1004px;top:985.5px;" width="12" height="5" viewBox="0 0 12 5"><rect x="0" y="0" width="1.3" height="1.3" fill="#1a1a1a"/><rect x="0" y="3" width="1.3" height="1.3" fill="#1a1a1a"/><rect x="3" y="0" width="1.3" height="1.3" fill="#1a1a1a"/><rect x="3" y="3" width="1.3" height="1.3" fill="#1a1a1a"/><rect x="6" y="0" width="1.3" height="1.3" fill="#1a1a1a"/><rect x="6" y="3" width="1.3" height="1.3" fill="#1a1a1a"/><rect x="9" y="0" width="1.3" height="1.3" fill="#1a1a1a"/><rect x="9" y="3" width="1.3" height="1.3" fill="#1a1a1a"/></svg><svg style="position:absolute;left:552px;top:114px;" width="22" height="9" viewBox="0 0 22 9"><path d="M0 9 L11 0 L22 9 Z" fill="#1b1b1b"/></svg><svg style="position:absolute;left:699px;top:154px;" width="9" height="19" viewBox="0 0 9 19"><rect x="0" y="0" width="8" height="19" fill="#2f2f2f" opacity="0.6"/><path d="M6 5.5 L2.5 9.5 L6 13.5" fill="none" stroke="#c0c0c0" stroke-width="1"/></svg><div style="position:absolute;left:519.6px;top:60.3px;width:66px;height:68px;mix-blend-mode:screen;isolation:isolate"><div style="position:absolute;left:11.4px;top:15.4px;width:43.2px;height:43.2px;border-radius:50%;background:#d2d2d2"></div><div style="position:absolute;left:8.4px;top:8.4px;width:43.2px;height:43.2px;border-radius:50%;background:rgb(207,93,172)"></div></div><div style="position:absolute;left:405.6px;top:475.4px;width:66px;height:68px;mix-blend-mode:screen;isolation:isolate"><div style="position:absolute;left:11.4px;top:14.4px;width:43.2px;height:43.2px;border-radius:50%;background:#d2d2d2"></div><div style="position:absolute;left:8.4px;top:8.4px;width:43.2px;height:43.2px;border-radius:50%;background:rgb(207,93,172)"></div></div><div style="position:absolute;left:448.5px;top:813.4px;width:66px;height:68px;mix-blend-mode:screen;isolation:isolate"><div style="position:absolute;left:12.9px;top:11.9px;width:43.2px;height:43.2px;border-radius:50%;background:#d2d2d2"></div><div style="position:absolute;left:8.4px;top:8.4px;width:43.2px;height:43.2px;border-radius:50%;background:rgb(207,93,172)"></div></div>
</body></html>
